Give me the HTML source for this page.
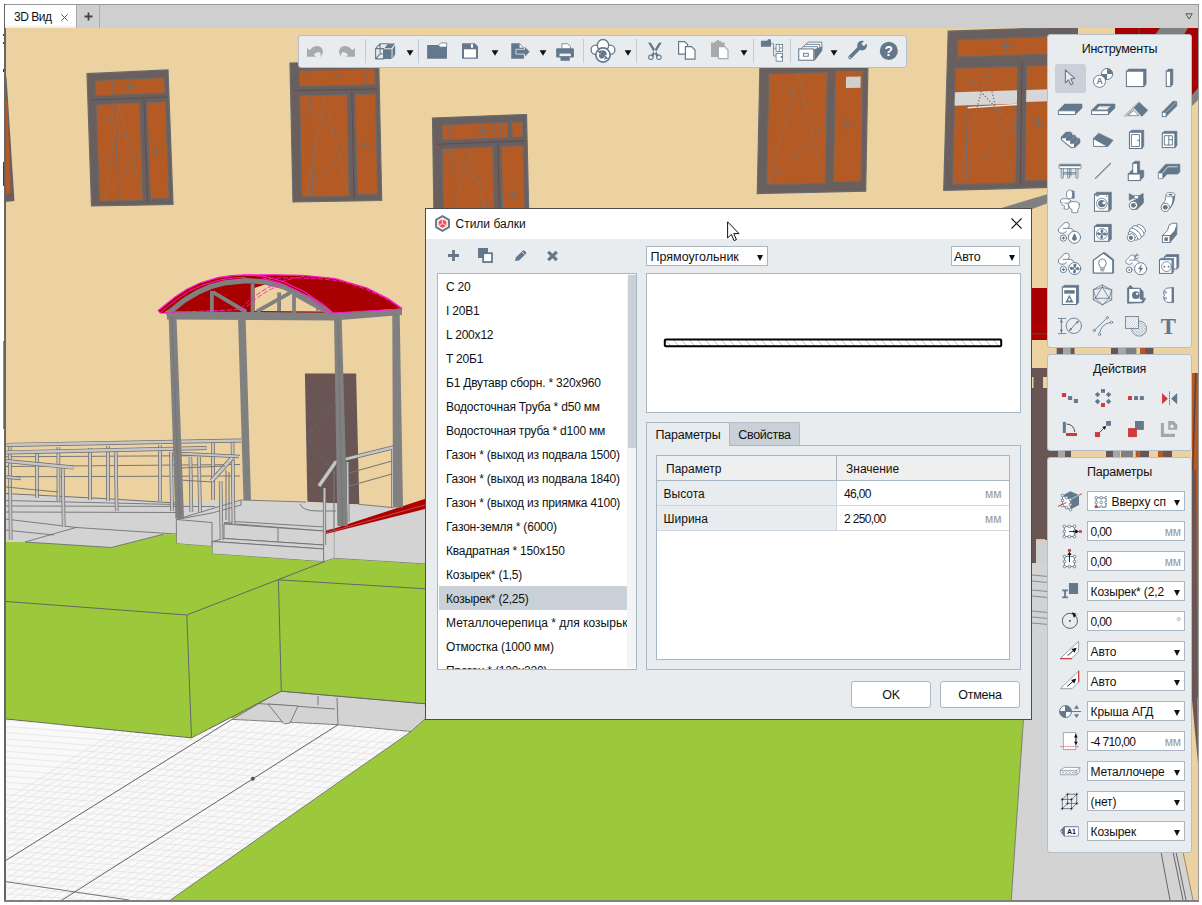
<!DOCTYPE html>
<html lang="ru"><head><meta charset="utf-8"><title>3D Вид</title><style>
*{box-sizing:border-box}
html,body{margin:0;padding:0;background:#fff}
body{width:1202px;height:905px;position:relative;overflow:hidden;font-family:"Liberation Sans",sans-serif;font-size:12px;color:#111}
.abs{position:absolute}
.ic{position:absolute;overflow:visible}
#scene{position:absolute;left:0;top:0}
.panel{position:absolute;background:#e8ecef;border:1px solid #b3bfcb;border-radius:3px}
.ptitle{position:absolute;left:0;right:0;text-align:center;font-size:12.5px;letter-spacing:-.2px;color:#111}
.n{letter-spacing:-.65px}
.tsep{position:absolute;top:39px;width:1px;height:24px;background:#c3ccd5}
.fld{position:absolute;left:1087px;width:98px;height:20px;background:#fff;border:1px solid #a9b7c4;line-height:20px;padding-left:2.5px;white-space:nowrap;overflow:hidden;font-size:12px;letter-spacing:-.1px}
.fld .u{position:absolute;right:3px;top:0;color:#999}
.cmb .a{top:7.5px!important}
.fld .a,.cmb .a{position:absolute;right:4.5px;top:7.5px;width:0;height:0;border-left:3.5px solid transparent;border-right:3.5px solid transparent;border-top:6px solid #111}
.cmb{position:absolute;height:20px;background:#fff;border:1px solid #a9b7c4;line-height:20px;padding-left:5px;white-space:nowrap;font-size:12.5px;letter-spacing:-.2px}
.li{position:absolute;left:1px;width:188px;height:24px;line-height:26px;padding-left:7px;white-space:nowrap;overflow:hidden;font-size:12px;letter-spacing:-.2px}
.btn{position:absolute;top:681px;width:80px;height:27px;background:#fff;border:1px solid #a9b7c4;border-radius:3px;text-align:center;line-height:27px;font-size:12.5px;letter-spacing:-.2px}

.cell{position:absolute;height:25px;line-height:26px;padding-left:8px;white-space:nowrap}
</style></head><body>
<svg id="scene" width="1202" height="905" viewBox="0 0 1202 905"><defs><clipPath id="floorclip"><polygon points="5,718.9 191.5,737.9 230,718 338,724.7 411,731.5 169,901 5,901"/></clipPath></defs><rect x="5" y="28" width="1193" height="873" fill="#ecd2a0"/>
<polygon points="87,73.7 168,70 173,204.5 91.5,206" fill="#6a5f5f" stroke="#686a6c" stroke-width="1.2"/>
<polygon points="95.4,80.6 164.6,77.6 165.2,93 95.9,95.9" fill="#b35a25" stroke="#686a6c" stroke-width=".9"/>
<line x1="112.4" y1="79.9" x2="112.9" y2="95.2" stroke="#7a6a68" stroke-width="1" />
<path d="M125.5 86.4h10M130.5 81.4v10" stroke="#7a6a64" stroke-width="1.3" fill="none"/>
<polygon points="96.2,104.5 139.6,102.8 143.1,200.4 99.5,201.2" fill="#b35a25" stroke="#686a6c" stroke-width=".9"/>
<line x1="114.8" y1="103.7" x2="118.2" y2="200.8" stroke="#7a6a68" stroke-width="1" />
<line x1="158.6" y1="102" x2="162.2" y2="198.7" stroke="#7a6a68" stroke-width="1" />
<line x1="97" y1="106.4" x2="140.9" y2="151.6" stroke="#84746e" stroke-width="1.3" stroke-dasharray="1.3 1.9"/>
<line x1="140.9" y1="151.6" x2="104.3" y2="199.1" stroke="#84746e" stroke-width="1.3" stroke-dasharray="1.3 1.9"/>
<line x1="104.3" y1="199.1" x2="119" y2="105.6" stroke="#84746e" stroke-width="1.3" stroke-dasharray="1.3 1.9"/>
<line x1="119" y1="105.6" x2="141.7" y2="197.1" stroke="#84746e" stroke-width="1.3" stroke-dasharray="1.3 1.9"/>
<polygon points="146.9,102.5 165.5,101.8 169.1,198.5 150.4,198.9" fill="#b35a25" stroke="#686a6c" stroke-width=".9"/>
<path d="M152.2 151.1h10M157.2 146.1v10" stroke="#7a6a64" stroke-width="1.3" fill="none"/>
<line x1="91.1" y1="100" x2="167.4" y2="97" stroke="#5c4d4c" stroke-width="1" />
<line x1="143.9" y1="99.2" x2="147.6" y2="202.3" stroke="#5c4d4c" stroke-width="1" />
<polygon points="290,63 378.7,61 381.7,200.5 293,202" fill="#6a5f5f" stroke="#686a6c" stroke-width="1.2"/>
<polygon points="299,70.4 374.9,68.8 375.2,84.8 299.4,86.4" fill="#b35a25" stroke="#686a6c" stroke-width=".9"/>
<line x1="309.1" y1="70.2" x2="309.4" y2="86.2" stroke="#7a6a68" stroke-width="1" />
<line x1="365.8" y1="69" x2="366.2" y2="85" stroke="#7a6a68" stroke-width="1" />
<path d="M332.3 77.3h10M337.3 72.3v10" stroke="#7a6a64" stroke-width="1.3" fill="none"/>
<polygon points="299.6,95.5 347,94.5 349.2,196.2 301.8,197" fill="#b35a25" stroke="#686a6c" stroke-width=".9"/>
<line x1="310.7" y1="95.2" x2="312.9" y2="196.8" stroke="#7a6a68" stroke-width="1" />
<line x1="367.9" y1="94" x2="370" y2="194.4" stroke="#7a6a68" stroke-width="1" />
<line x1="300.5" y1="97.5" x2="347.7" y2="145.3" stroke="#84746e" stroke-width="1.3" stroke-dasharray="1.3 1.9"/>
<line x1="347.7" y1="145.3" x2="307" y2="194.8" stroke="#84746e" stroke-width="1.3" stroke-dasharray="1.3 1.9"/>
<line x1="307" y1="194.8" x2="324.5" y2="97" stroke="#84746e" stroke-width="1.3" stroke-dasharray="1.3 1.9"/>
<line x1="324.5" y1="97" x2="347.8" y2="192.7" stroke="#84746e" stroke-width="1.3" stroke-dasharray="1.3 1.9"/>
<polygon points="355,94.3 375.4,93.9 377.6,194.3 357.2,194.6" fill="#b35a25" stroke="#686a6c" stroke-width=".9"/>
<path d="M360.4 145h10M365.4 140v10" stroke="#7a6a64" stroke-width="1.3" fill="none"/>
<line x1="294.1" y1="90.7" x2="377.5" y2="88.9" stroke="#5c4d4c" stroke-width="1" />
<line x1="351.8" y1="90.9" x2="354.1" y2="198.2" stroke="#5c4d4c" stroke-width="1" />
<polygon points="432.5,118 526.5,114.5 529.5,246 434.5,250" fill="#6a5f5f" stroke="#686a6c" stroke-width="1.2"/>
<polygon points="442,124.9 522.4,121.9 522.8,137 442.3,140.1" fill="#b35a25" stroke="#686a6c" stroke-width=".9"/>
<line x1="450.5" y1="124.6" x2="450.7" y2="139.8" stroke="#7a6a68" stroke-width="1" />
<line x1="494.7" y1="122.9" x2="495" y2="138.1" stroke="#7a6a68" stroke-width="1" />
<line x1="500.3" y1="122.7" x2="500.6" y2="137.9" stroke="#7a6a68" stroke-width="1" />
<path d="M477.6 130.6h10M482.6 125.6v10" stroke="#7a6a64" stroke-width="1.3" fill="none"/>
<polygon points="442.4,148.7 492.8,146.7 494.7,242.9 443.9,245" fill="#b35a25" stroke="#686a6c" stroke-width=".9"/>
<line x1="452.8" y1="148.3" x2="454.4" y2="244.5" stroke="#7a6a68" stroke-width="1" />
<line x1="515" y1="145.9" x2="517" y2="240.6" stroke="#7a6a68" stroke-width="1" />
<line x1="443.4" y1="150.6" x2="493.3" y2="194.8" stroke="#84746e" stroke-width="1.3" stroke-dasharray="1.3 1.9"/>
<line x1="493.3" y1="194.8" x2="449.6" y2="242.8" stroke="#84746e" stroke-width="1.3" stroke-dasharray="1.3 1.9"/>
<line x1="449.6" y1="242.8" x2="468.8" y2="149.6" stroke="#84746e" stroke-width="1.3" stroke-dasharray="1.3 1.9"/>
<line x1="468.8" y1="149.6" x2="493.2" y2="239.6" stroke="#84746e" stroke-width="1.3" stroke-dasharray="1.3 1.9"/>
<polygon points="501.3,146.4 523,145.6 525.1,240.3 503.3,241.2" fill="#b35a25" stroke="#686a6c" stroke-width=".9"/>
<path d="M507.2 194h10M512.2 189v10" stroke="#7a6a64" stroke-width="1.3" fill="none"/>
<line x1="436.7" y1="144.3" x2="525.2" y2="140.9" stroke="#5c4d4c" stroke-width="1" />
<line x1="497.9" y1="143.2" x2="500" y2="244.6" stroke="#5c4d4c" stroke-width="1" />
<polygon points="507.8,121.8 511.6,121.6 512,138.1 508.2,138.2" fill="#6a5f5f" stroke="#686a6c" stroke-width="1.2"/>
<polygon points="5,77 6.5,77 14.4,200 14.4,201 5,202" fill="#6a5f5f"/>
<polygon points="5.5,100 7.2,100 10.6,193 5.5,195" fill="#b35a25"/>
<rect x="3" y="162" width="2" height="24" fill="#a01818"/><rect x="3" y="34" width="2" height="2" fill="#446"/><rect x="3" y="42" width="2" height="2" fill="#533"/><rect x="3" y="69" width="2" height="3" fill="#335"/><rect x="3" y="341" width="1.6" height="88" fill="#7aa82a"/>
<polygon points="760,62 868,60 865.7,191.2 757.3,193.6" fill="#6a5f5f" stroke="#686a6c" stroke-width="1.2"/>
<polygon points="768.9,73.7 827.3,72.6 825.2,183.6 766.7,184.8" fill="#b35a25" stroke="#686a6c" stroke-width=".9"/>
<polygon points="835.4,71.1 863,70.6 861,181.5 833.4,182.1" fill="#b35a25" stroke="#686a6c" stroke-width=".9"/>
<polygon points="846.1,76.8 860.7,76.5 860.5,87.7 845.9,88" fill="#d0d0d0" />
<path d="M841.4 124.7h12M847.4 118.7v12" stroke="#7a6a64" stroke-width="1.3" fill="none"/>
<line x1="770.5" y1="75" x2="825.8" y2="123.8" stroke="#84746e" stroke-width="1.3" stroke-dasharray="1.3 1.9"/>
<line x1="825.8" y1="123.8" x2="768.4" y2="182.8" stroke="#84746e" stroke-width="1.3" stroke-dasharray="1.3 1.9"/>
<line x1="768.4" y1="182.8" x2="798.6" y2="74.4" stroke="#84746e" stroke-width="1.3" stroke-dasharray="1.3 1.9"/>
<line x1="798.6" y1="74.4" x2="822.6" y2="179" stroke="#84746e" stroke-width="1.3" stroke-dasharray="1.3 1.9"/>
<polygon points="948.2,31.2 1100,26 1100,186 943.7,190.4" fill="#6a5f5f" stroke="#686a6c" stroke-width="1.2"/>
<polygon points="957.8,39.6 1100,34.8 1100,52.4 957.4,57.1" fill="#b35a25" stroke="#686a6c" stroke-width=".9"/>
<path d="M999.3 46.7h14M1006.3 39.7v14" stroke="#7a6a64" stroke-width="1.3" fill="none"/>
<polygon points="955.5,68.3 1017.5,66.3 1015.7,182.8 952.4,184.6" fill="#b35a25" stroke="#686a6c" stroke-width=".9"/>
<polygon points="1026.6,66 1100,63.6 1100,178.8 1025.1,180.9" fill="#b35a25" stroke="#686a6c" stroke-width=".9"/>
<line x1="1022.1" y1="62.2" x2="1020.3" y2="185.1" stroke="#5c4d4c" stroke-width="1" />
<polygon points="954.9,92.2 1017.1,90.2 1016.9,103.8 954.6,105.8" fill="#d6d6d6" />
<polygon points="1026.3,89.9 1100,87.6 1100,99.6 1026.1,101.9" fill="#d6d6d6" />
<line x1="967.6" y1="105.3" x2="965.7" y2="183.4" stroke="#7a6a68" stroke-width="1.6" />
<line x1="967.6" y1="107.7" x2="1016.9" y2="104.6" stroke="#e6e6e6" stroke-width="1.5" />
<line x1="960.8" y1="70.5" x2="1015" y2="127.8" stroke="#84746e" stroke-width="1.3" stroke-dasharray="1.3 1.9"/>
<line x1="1015" y1="127.8" x2="958" y2="182" stroke="#84746e" stroke-width="1.3" stroke-dasharray="1.3 1.9"/>
<line x1="958" y1="182" x2="986.8" y2="69.7" stroke="#84746e" stroke-width="1.3" stroke-dasharray="1.3 1.9"/>
<line x1="986.8" y1="69.7" x2="1012.6" y2="178.9" stroke="#84746e" stroke-width="1.3" stroke-dasharray="1.3 1.9"/>
<path d="M1032.2 122.3h12M1038.2 116.3v12" stroke="#7a6a64" stroke-width="1.3" fill="none"/>
<rect x="1078" y="28" width="40" height="10" fill="#ecd2a0"/>
<polygon points="998,209 1048,194 1048,203 1032,209" fill="#808080"/>
<rect x="1031" y="288" width="20" height="52" fill="#a80000"/>
<rect x="1031" y="333" width="20" height="1.5" fill="#7a3030"/>
<rect x="1115" y="28" width="84" height="70" fill="#a80000"/>
<polygon points="1160,28 1188,28 1183,36 1154,36" fill="#808080"/>
<rect x="1138" y="28" width="2" height="8" fill="#8a2020"/>
<polygon points="1192,95 1198,88 1198,100 1192,106" fill="#808080"/>
<rect x="1031" y="368" width="17.5" height="195" fill="#6a5555"/>
<rect x="1056.7" y="347" width="6.3" height="8.5" fill="#6a5555"/>
<rect x="1063" y="347" width="7.6" height="8.5" fill="#a6a6a6"/>
<rect x="1070.6" y="347" width="3.9" height="8.5" fill="#6a5555"/>
<rect x="1111" y="347" width="7" height="8.5" fill="#6a5555"/>
<rect x="1118" y="347" width="7.6" height="8.5" fill="#a6a6a6"/>
<rect x="1125.6" y="347" width="10.8" height="8.5" fill="#808080"/>
<rect x="1140" y="347" width="5" height="8.5" fill="#b35a25"/>
<rect x="1145" y="347" width="8.4" height="8.5" fill="#6a5555"/>
<rect x="1047" y="450" width="11" height="8.5" fill="#6a5555"/>
<rect x="1058" y="450" width="7" height="8.5" fill="#a6a6a6"/>
<rect x="1065" y="450" width="6" height="8.5" fill="#6a5555"/>
<rect x="1106" y="450" width="7" height="8.5" fill="#6a5555"/>
<rect x="1113" y="450" width="7" height="8.5" fill="#a6a6a6"/>
<rect x="1121" y="450" width="12" height="8.5" fill="#808080"/>
<rect x="1135.7" y="450" width="3.8" height="8.5" fill="#b35a25"/>
<rect x="1139.5" y="450" width="9.5" height="8.5" fill="#6a5555"/>
<rect x="1158" y="450" width="5" height="8.5" fill="#b35a25"/>
<rect x="1163" y="450" width="9" height="8.5" fill="#6a5555"/>
<rect x="1031.5" y="377" width="2" height="11" fill="#ecd2a0"/>
<rect x="1043" y="377" width="5" height="11" fill="#ecd2a0"/>
<rect x="1036" y="540" width="12" height="23" fill="#d0d0d0"/>
<rect x="1036" y="539" width="9" height="1.5" fill="#e0c870"/>
<polygon points="1192,373 1199,373 1199,700 1192,690" fill="#b35a25"/>
<polygon points="1192,470 1196,470 1198,763 1192,700" fill="#6a5555"/>
<polygon points="1195,373 1196.5,373 1193.5,470 1192,470" fill="#5a4040"/>
<polygon points="1031,563 1110,563 1193,901 1005,901 1022,717" fill="#d3d3d3"/>
<line x1="1161" y1="852" x2="1170" y2="900" stroke="#666" stroke-width="1"/>
<line x1="1173" y1="852" x2="1183" y2="900" stroke="#666" stroke-width="1"/>
<line x1="1176" y1="852" x2="1186" y2="900" stroke="#666" stroke-width="1"/>
<line x1="1183" y1="852" x2="1193" y2="900" stroke="#777" stroke-width=".8"/>
<line x1="1032" y1="575" x2="1048" y2="576.5" stroke="#777" stroke-width=".8"/>
<line x1="1032" y1="581" x2="1048" y2="582.5" stroke="#777" stroke-width=".8"/>
<line x1="1032" y1="590" x2="1048" y2="591.5" stroke="#777" stroke-width=".8"/>
<line x1="1032" y1="596" x2="1048" y2="597.5" stroke="#777" stroke-width=".8"/>
<line x1="1032" y1="611" x2="1048" y2="612.5" stroke="#777" stroke-width=".8"/>
<line x1="1032" y1="617" x2="1048" y2="618.5" stroke="#777" stroke-width=".8"/>
<line x1="1032" y1="623" x2="1048" y2="624.5" stroke="#777" stroke-width=".8"/>
<polygon points="304.9,373.4 356.1,373.4 359.3,504.4 307.4,501.8" fill="#6a5555"/>
<line x1="306.1" y1="438" x2="356.2" y2="375.1" stroke="#5f6568" stroke-width="0.9" />
<line x1="306.1" y1="438" x2="359" y2="502" stroke="#5f6568" stroke-width="0.9" />
<polygon points="5,493.5 112,499 176,503 241,500 306,502 359,504.4 393,507.6 426,507.6 426,570 5,570" fill="#d3d3d3"/>
<line x1="5" y1="493.5" x2="112" y2="499" stroke="#666" stroke-width="0.9" />
<line x1="112" y1="499" x2="176" y2="503" stroke="#666" stroke-width="0.9" />
<line x1="241.4" y1="500" x2="306" y2="502" stroke="#666" stroke-width="0.8" />
<line x1="359" y1="504.4" x2="393" y2="507.6" stroke="#666" stroke-width="0.8" />
<line x1="5" y1="500.5" x2="176" y2="504.5" stroke="#666" stroke-width="0.8" />
<line x1="5" y1="506" x2="215" y2="506.5" stroke="#666" stroke-width="0.8" />
<line x1="5" y1="512" x2="176" y2="512.5" stroke="#666" stroke-width="0.8" />
<line x1="5" y1="519" x2="76" y2="527.5" stroke="#666" stroke-width="0.8" />
<line x1="76" y1="527.5" x2="176" y2="534" stroke="#666" stroke-width="0.8" />
<line x1="5" y1="530" x2="54" y2="535" stroke="#666" stroke-width="0.8" />
<line x1="25" y1="542" x2="76" y2="527.5" stroke="#666" stroke-width="0.8" />
<polygon points="176.3,519.5 241,500 241,505 212,513" fill="#d3d3d3" stroke="#666" stroke-width="0.8" stroke-linejoin="round"/>
<polygon points="176.3,519.5 212,522.5 212,546.5 176.5,543.7" fill="#d3d3d3" stroke="#666" stroke-width="0.8" stroke-linejoin="round"/>
<polygon points="224,523 234,521.5 325,527 323.6,531" fill="#d3d3d3" stroke="#666" stroke-width="0.8" stroke-linejoin="round"/>
<polygon points="224,524 323.6,531 323.6,545 224,538.5" fill="#d3d3d3" stroke="#666" stroke-width="0.8" stroke-linejoin="round"/>
<line x1="278" y1="528" x2="278" y2="541.5" stroke="#666" stroke-width="0.8" />
<polygon points="212.2,541.5 224,538.5 323.6,545 325,549" fill="#d3d3d3" stroke="#666" stroke-width="0.8" stroke-linejoin="round"/>
<polygon points="212.2,541.5 325,549 323.6,561.7 212.2,554" fill="#d3d3d3" stroke="#666" stroke-width="0.8" stroke-linejoin="round"/>
<polygon points="323.6,531 334.4,529 334.4,558.4 323.6,561.7" fill="#d3d3d3" stroke="#666" stroke-width="0.8" stroke-linejoin="round"/>
<path d="M300 504 Q302 511 318 511 L336 511" fill="none" stroke="#666" stroke-width=".8"/>
<polygon points="334.4,532.5 426,508.5 426,564 334.4,558.4" fill="#d3d3d3"/>
<line x1="334.4" y1="558.4" x2="426" y2="564" stroke="#666" stroke-width="0.8" />
<polygon points="323.6,532 426,498.6 426,508.8 323.6,534.6" fill="#ae0000"/>
<line x1="323.6" y1="533.6" x2="426" y2="504.6" stroke="#d08080" stroke-width="0.6" />
<polygon points="5,542.1 25,542 111.4,547.5 163.4,534.2 176,534.2 176.5,543.7 212.2,546.5 212.2,554 323.6,561.7 334.4,558.4 426,564.2 426,720 5,740" fill="#9cc83c"/>
<polygon points="411,731.5 426,718 1023.6,717 1011.2,901 168,901" fill="#9cc83c"/>
<line x1="1023.6" y1="717" x2="1011.2" y2="901" stroke="#777" stroke-width="0.9" />
<line x1="25" y1="542" x2="111.4" y2="547.5" stroke="#666" stroke-width="0.8" />
<line x1="111.4" y1="547.5" x2="163.4" y2="534.2" stroke="#666" stroke-width="0.8" />
<polygon points="5,718.9 191.5,737.9 230,718 338,724.7 411,731.5 169,901 5,901" fill="#f9f9f9"/>
<polygon points="232,719.4 267.6,698.4 281.3,691.2 426,703.8 426,718 411,731.5 338,724.7" fill="#d3d3d3" stroke="#666" stroke-width="0.8" stroke-linejoin="round"/>
<line x1="258" y1="703.5" x2="335" y2="709" stroke="#666" stroke-width="0.8" />
<polygon points="268,704 298,706 290,723 284,724" fill="#d3d3d3" stroke="#666" stroke-width="0.8" stroke-linejoin="round"/>
<line x1="318" y1="696" x2="318" y2="705" stroke="#666" stroke-width="0.8" />
<line x1="337" y1="698" x2="338" y2="724.7" stroke="#666" stroke-width="0.8" />
<polygon points="5,601.4 186.8,615 191.5,737.9 5,718.9" fill="#9cc83c"/>
<polygon points="186.8,615 278.4,579.8 281.3,691.2 267.6,698.4 230,718 191.5,737.9" fill="#9cc83c"/>
<polygon points="278.4,579.8 426,588.8 426,703.8 281.3,691.2" fill="#9cc83c"/>
<line x1="5" y1="601.4" x2="186.8" y2="615" stroke="#666" stroke-width="1" />
<line x1="186.8" y1="615" x2="191.5" y2="737.9" stroke="#666" stroke-width="1" />
<line x1="5" y1="718.9" x2="191.5" y2="737.9" stroke="#666" stroke-width="1" />
<line x1="186.8" y1="615" x2="325" y2="561.5" stroke="#666" stroke-width="1" />
<line x1="278.4" y1="579.8" x2="281.3" y2="691.2" stroke="#666" stroke-width="1" />
<line x1="278.4" y1="579.8" x2="426" y2="588.8" stroke="#666" stroke-width="1" />
<line x1="281.3" y1="691.2" x2="426" y2="703.8" stroke="#666" stroke-width="1" />
<line x1="191.5" y1="737.9" x2="281.3" y2="691.2" stroke="#666" stroke-width="1" />
<g clip-path="url(#floorclip)">
<line x1="142" y1="714.9" x2="-221.2" y2="941.46" stroke="#dcdcdc" stroke-width="0.6" />
<line x1="151" y1="715.35" x2="-212.2" y2="941.91" stroke="#dcdcdc" stroke-width="0.6" />
<line x1="160" y1="715.8" x2="-203.2" y2="942.36" stroke="#dcdcdc" stroke-width="0.6" />
<line x1="169" y1="716.25" x2="-194.2" y2="942.81" stroke="#dcdcdc" stroke-width="0.6" />
<line x1="178" y1="716.7" x2="-185.2" y2="943.26" stroke="#dcdcdc" stroke-width="0.6" />
<line x1="187" y1="717.15" x2="-176.2" y2="943.71" stroke="#dcdcdc" stroke-width="0.6" />
<line x1="196" y1="717.6" x2="-167.2" y2="944.16" stroke="#dcdcdc" stroke-width="0.6" />
<line x1="205" y1="718.05" x2="-158.2" y2="944.61" stroke="#dcdcdc" stroke-width="0.6" />
<line x1="214" y1="718.5" x2="-149.2" y2="945.06" stroke="#dcdcdc" stroke-width="0.6" />
<line x1="223" y1="718.95" x2="-140.2" y2="945.51" stroke="#dcdcdc" stroke-width="0.6" />
<line x1="232" y1="719.4" x2="-131.2" y2="945.96" stroke="#dcdcdc" stroke-width="0.6" />
<line x1="241" y1="719.85" x2="-122.2" y2="946.41" stroke="#dcdcdc" stroke-width="0.6" />
<line x1="250" y1="720.3" x2="-113.2" y2="946.86" stroke="#dcdcdc" stroke-width="0.6" />
<line x1="259" y1="720.75" x2="-104.2" y2="947.31" stroke="#dcdcdc" stroke-width="0.6" />
<line x1="268" y1="721.2" x2="-95.2" y2="947.76" stroke="#dcdcdc" stroke-width="0.6" />
<line x1="277" y1="721.65" x2="-86.2" y2="948.21" stroke="#dcdcdc" stroke-width="0.6" />
<line x1="286" y1="722.1" x2="-77.2" y2="948.66" stroke="#dcdcdc" stroke-width="0.6" />
<line x1="295" y1="722.55" x2="-68.2" y2="949.11" stroke="#dcdcdc" stroke-width="0.6" />
<line x1="304" y1="723" x2="-59.2" y2="949.56" stroke="#dcdcdc" stroke-width="0.6" />
<line x1="313" y1="723.45" x2="-50.2" y2="950.01" stroke="#dcdcdc" stroke-width="0.6" />
<line x1="322" y1="723.9" x2="-41.2" y2="950.46" stroke="#dcdcdc" stroke-width="0.6" />
<line x1="331" y1="724.35" x2="-32.2" y2="950.91" stroke="#dcdcdc" stroke-width="0.6" />
<line x1="340" y1="724.8" x2="-23.2" y2="951.36" stroke="#dcdcdc" stroke-width="0.6" />
<line x1="349" y1="725.25" x2="-14.2" y2="951.81" stroke="#dcdcdc" stroke-width="0.6" />
<line x1="358" y1="725.7" x2="-5.2" y2="952.26" stroke="#dcdcdc" stroke-width="0.6" />
<line x1="367" y1="726.15" x2="3.8" y2="952.71" stroke="#dcdcdc" stroke-width="0.6" />
<line x1="376" y1="726.6" x2="12.8" y2="953.16" stroke="#dcdcdc" stroke-width="0.6" />
<line x1="385" y1="727.05" x2="21.8" y2="953.61" stroke="#dcdcdc" stroke-width="0.6" />
<line x1="394" y1="727.5" x2="30.8" y2="954.06" stroke="#dcdcdc" stroke-width="0.6" />
<line x1="403" y1="727.95" x2="39.8" y2="954.51" stroke="#dcdcdc" stroke-width="0.6" />
<line x1="412" y1="728.4" x2="48.8" y2="954.96" stroke="#dcdcdc" stroke-width="0.6" />
<line x1="421" y1="728.85" x2="57.8" y2="955.41" stroke="#dcdcdc" stroke-width="0.6" />
<line x1="430" y1="729.3" x2="66.8" y2="955.86" stroke="#dcdcdc" stroke-width="0.6" />
<line x1="439" y1="729.75" x2="75.8" y2="956.31" stroke="#dcdcdc" stroke-width="0.6" />
<line x1="448" y1="730.2" x2="84.8" y2="956.76" stroke="#dcdcdc" stroke-width="0.6" />
<line x1="457" y1="730.65" x2="93.8" y2="957.21" stroke="#dcdcdc" stroke-width="0.6" />
<line x1="466" y1="731.1" x2="102.8" y2="957.66" stroke="#dcdcdc" stroke-width="0.6" />
<line x1="475" y1="731.55" x2="111.8" y2="958.11" stroke="#dcdcdc" stroke-width="0.6" />
<line x1="484" y1="732" x2="120.8" y2="958.56" stroke="#dcdcdc" stroke-width="0.6" />
<line x1="493" y1="732.45" x2="129.8" y2="959.01" stroke="#dcdcdc" stroke-width="0.6" />
<line x1="502" y1="732.9" x2="138.8" y2="959.46" stroke="#dcdcdc" stroke-width="0.6" />
<line x1="511" y1="733.35" x2="147.8" y2="959.91" stroke="#dcdcdc" stroke-width="0.6" />
<line x1="520" y1="733.8" x2="156.8" y2="960.36" stroke="#dcdcdc" stroke-width="0.6" />
<line x1="529" y1="734.25" x2="165.8" y2="960.81" stroke="#dcdcdc" stroke-width="0.6" />
<line x1="538" y1="734.7" x2="174.8" y2="961.26" stroke="#dcdcdc" stroke-width="0.6" />
<line x1="547" y1="735.15" x2="183.8" y2="961.71" stroke="#dcdcdc" stroke-width="0.6" />
<line x1="556" y1="735.6" x2="192.8" y2="962.16" stroke="#dcdcdc" stroke-width="0.6" />
<line x1="565" y1="736.05" x2="201.8" y2="962.61" stroke="#dcdcdc" stroke-width="0.6" />
<line x1="574" y1="736.5" x2="210.8" y2="963.06" stroke="#dcdcdc" stroke-width="0.6" />
<line x1="583" y1="736.95" x2="219.8" y2="963.51" stroke="#dcdcdc" stroke-width="0.6" />
<line x1="592" y1="737.4" x2="228.8" y2="963.96" stroke="#dcdcdc" stroke-width="0.6" />
<line x1="601" y1="737.85" x2="237.8" y2="964.41" stroke="#dcdcdc" stroke-width="0.6" />
<line x1="610" y1="738.3" x2="246.8" y2="964.86" stroke="#dcdcdc" stroke-width="0.6" />
<line x1="619" y1="738.75" x2="255.8" y2="965.31" stroke="#dcdcdc" stroke-width="0.6" />
<line x1="628" y1="739.2" x2="264.8" y2="965.76" stroke="#dcdcdc" stroke-width="0.6" />
<line x1="637" y1="739.65" x2="273.8" y2="966.21" stroke="#dcdcdc" stroke-width="0.6" />
<line x1="646" y1="740.1" x2="282.8" y2="966.66" stroke="#dcdcdc" stroke-width="0.6" />
<line x1="655" y1="740.55" x2="291.8" y2="967.11" stroke="#dcdcdc" stroke-width="0.6" />
<line x1="664" y1="741" x2="300.8" y2="967.56" stroke="#dcdcdc" stroke-width="0.6" />
<line x1="673" y1="741.45" x2="309.8" y2="968.01" stroke="#dcdcdc" stroke-width="0.6" />
<line x1="682" y1="741.9" x2="318.8" y2="968.46" stroke="#dcdcdc" stroke-width="0.6" />
<line x1="691" y1="742.35" x2="327.8" y2="968.91" stroke="#dcdcdc" stroke-width="0.6" />
<line x1="700" y1="742.8" x2="336.8" y2="969.36" stroke="#dcdcdc" stroke-width="0.6" />
<line x1="709" y1="743.25" x2="345.8" y2="969.81" stroke="#dcdcdc" stroke-width="0.6" />
<line x1="718" y1="743.7" x2="354.8" y2="970.26" stroke="#dcdcdc" stroke-width="0.6" />
<line x1="727" y1="744.15" x2="363.8" y2="970.71" stroke="#dcdcdc" stroke-width="0.6" />
<line x1="736" y1="744.6" x2="372.8" y2="971.16" stroke="#dcdcdc" stroke-width="0.6" />
<line x1="745" y1="745.05" x2="381.8" y2="971.61" stroke="#dcdcdc" stroke-width="0.6" />
<line x1="754" y1="745.5" x2="390.8" y2="972.06" stroke="#dcdcdc" stroke-width="0.6" />
<line x1="763" y1="745.95" x2="399.8" y2="972.51" stroke="#dcdcdc" stroke-width="0.6" />
<line x1="772" y1="746.4" x2="408.8" y2="972.96" stroke="#dcdcdc" stroke-width="0.6" />
<line x1="781" y1="746.85" x2="417.8" y2="973.41" stroke="#dcdcdc" stroke-width="0.6" />
<line x1="790" y1="747.3" x2="426.8" y2="973.86" stroke="#dcdcdc" stroke-width="0.6" />
<line x1="799" y1="747.75" x2="435.8" y2="974.31" stroke="#dcdcdc" stroke-width="0.6" />
<line x1="808" y1="748.2" x2="444.8" y2="974.76" stroke="#dcdcdc" stroke-width="0.6" />
<line x1="817" y1="748.65" x2="453.8" y2="975.21" stroke="#dcdcdc" stroke-width="0.6" />
<line x1="826" y1="749.1" x2="462.8" y2="975.66" stroke="#dcdcdc" stroke-width="0.6" />
<line x1="835" y1="749.55" x2="471.8" y2="976.11" stroke="#dcdcdc" stroke-width="0.6" />
<line x1="844" y1="750" x2="480.8" y2="976.56" stroke="#dcdcdc" stroke-width="0.6" />
<line x1="853" y1="750.45" x2="489.8" y2="977.01" stroke="#dcdcdc" stroke-width="0.6" />
<line x1="862" y1="750.9" x2="498.8" y2="977.46" stroke="#dcdcdc" stroke-width="0.6" />
<line x1="871" y1="751.35" x2="507.8" y2="977.91" stroke="#dcdcdc" stroke-width="0.6" />
<line x1="880" y1="751.8" x2="516.8" y2="978.36" stroke="#dcdcdc" stroke-width="0.6" />
<line x1="889" y1="752.25" x2="525.8" y2="978.81" stroke="#dcdcdc" stroke-width="0.6" />
<line x1="898" y1="752.7" x2="534.8" y2="979.26" stroke="#dcdcdc" stroke-width="0.6" />
<line x1="907" y1="753.15" x2="543.8" y2="979.71" stroke="#dcdcdc" stroke-width="0.6" />
<line x1="916" y1="753.6" x2="552.8" y2="980.16" stroke="#dcdcdc" stroke-width="0.6" />
<line x1="925" y1="754.05" x2="561.8" y2="980.61" stroke="#dcdcdc" stroke-width="0.6" />
<line x1="934" y1="754.5" x2="570.8" y2="981.06" stroke="#dcdcdc" stroke-width="0.6" />
<line x1="943" y1="754.95" x2="579.8" y2="981.51" stroke="#dcdcdc" stroke-width="0.6" />
<line x1="5" y1="714" x2="430" y2="746" stroke="#dedede" stroke-width="0.6" />
<line x1="5" y1="720.2" x2="430" y2="752.2" stroke="#dedede" stroke-width="0.6" />
<line x1="5" y1="726.4" x2="430" y2="758.4" stroke="#dedede" stroke-width="0.6" />
<line x1="5" y1="732.6" x2="430" y2="764.6" stroke="#dedede" stroke-width="0.6" />
<line x1="5" y1="738.8" x2="430" y2="770.8" stroke="#dedede" stroke-width="0.6" />
<line x1="5" y1="745" x2="430" y2="777" stroke="#dedede" stroke-width="0.6" />
<line x1="5" y1="751.2" x2="430" y2="783.2" stroke="#dedede" stroke-width="0.6" />
<line x1="5" y1="757.4" x2="430" y2="789.4" stroke="#dedede" stroke-width="0.6" />
<line x1="5" y1="763.6" x2="430" y2="795.6" stroke="#dedede" stroke-width="0.6" />
<line x1="5" y1="769.8" x2="430" y2="801.8" stroke="#dedede" stroke-width="0.6" />
<line x1="5" y1="776" x2="430" y2="808" stroke="#dedede" stroke-width="0.6" />
<line x1="5" y1="782.2" x2="430" y2="814.2" stroke="#dedede" stroke-width="0.6" />
<line x1="5" y1="788.4" x2="430" y2="820.4" stroke="#dedede" stroke-width="0.6" />
<line x1="5" y1="794.6" x2="430" y2="826.6" stroke="#dedede" stroke-width="0.6" />
<line x1="5" y1="800.8" x2="430" y2="832.8" stroke="#dedede" stroke-width="0.6" />
<line x1="5" y1="807" x2="430" y2="839" stroke="#dedede" stroke-width="0.6" />
<line x1="5" y1="813.2" x2="430" y2="845.2" stroke="#dedede" stroke-width="0.6" />
<line x1="5" y1="819.4" x2="430" y2="851.4" stroke="#dedede" stroke-width="0.6" />
<line x1="5" y1="825.6" x2="430" y2="857.6" stroke="#dedede" stroke-width="0.6" />
<line x1="5" y1="831.8" x2="430" y2="863.8" stroke="#dedede" stroke-width="0.6" />
<line x1="5" y1="838" x2="430" y2="870" stroke="#dedede" stroke-width="0.6" />
<line x1="5" y1="844.2" x2="430" y2="876.2" stroke="#dedede" stroke-width="0.6" />
<line x1="5" y1="850.4" x2="430" y2="882.4" stroke="#dedede" stroke-width="0.6" />
<line x1="5" y1="856.6" x2="430" y2="888.6" stroke="#dedede" stroke-width="0.6" />
<line x1="5" y1="862.8" x2="430" y2="894.8" stroke="#dedede" stroke-width="0.6" />
<line x1="5" y1="869" x2="430" y2="901" stroke="#dedede" stroke-width="0.6" />
<line x1="5" y1="875.2" x2="430" y2="907.2" stroke="#dedede" stroke-width="0.6" />
<line x1="5" y1="881.4" x2="430" y2="913.4" stroke="#dedede" stroke-width="0.6" />
<line x1="5" y1="887.6" x2="430" y2="919.6" stroke="#dedede" stroke-width="0.6" />
<line x1="5" y1="893.8" x2="430" y2="925.8" stroke="#dedede" stroke-width="0.6" />
<line x1="5" y1="900" x2="430" y2="932" stroke="#dedede" stroke-width="0.6" />
<line x1="5" y1="906.2" x2="430" y2="938.2" stroke="#dedede" stroke-width="0.6" />
<line x1="5" y1="912.4" x2="430" y2="944.4" stroke="#dedede" stroke-width="0.6" />
<line x1="5" y1="918.6" x2="430" y2="950.6" stroke="#dedede" stroke-width="0.6" />
<line x1="5" y1="924.8" x2="430" y2="956.8" stroke="#dedede" stroke-width="0.6" />
<line x1="5" y1="931" x2="430" y2="963" stroke="#dedede" stroke-width="0.6" />
<line x1="5" y1="937.2" x2="430" y2="969.2" stroke="#dedede" stroke-width="0.6" />
<line x1="5" y1="943.4" x2="430" y2="975.4" stroke="#dedede" stroke-width="0.6" />
<line x1="5" y1="949.6" x2="430" y2="981.6" stroke="#dedede" stroke-width="0.6" />
<line x1="5" y1="955.8" x2="430" y2="987.8" stroke="#dedede" stroke-width="0.6" />
<line x1="5" y1="962" x2="430" y2="994" stroke="#dedede" stroke-width="0.6" />
<line x1="5" y1="968.2" x2="430" y2="1000.2" stroke="#dedede" stroke-width="0.6" />
<line x1="5" y1="974.4" x2="430" y2="1006.4" stroke="#dedede" stroke-width="0.6" />
<line x1="5" y1="980.6" x2="430" y2="1012.6" stroke="#dedede" stroke-width="0.6" />
<line x1="5" y1="986.8" x2="430" y2="1018.8" stroke="#dedede" stroke-width="0.6" />
<line x1="5" y1="993" x2="430" y2="1025" stroke="#dedede" stroke-width="0.6" />
<line x1="5" y1="999.2" x2="430" y2="1031.2" stroke="#dedede" stroke-width="0.6" />
<line x1="5" y1="1005.4" x2="430" y2="1037.4" stroke="#dedede" stroke-width="0.6" />
<line x1="5" y1="1011.6" x2="430" y2="1043.6" stroke="#dedede" stroke-width="0.6" />
<line x1="5" y1="1017.8" x2="430" y2="1049.8" stroke="#dedede" stroke-width="0.6" />
<line x1="5" y1="1024" x2="430" y2="1056" stroke="#dedede" stroke-width="0.6" />
<line x1="5" y1="1030.2" x2="430" y2="1062.2" stroke="#dedede" stroke-width="0.6" />
<line x1="5" y1="1036.4" x2="430" y2="1068.4" stroke="#dedede" stroke-width="0.6" />
<line x1="5" y1="1042.6" x2="430" y2="1074.6" stroke="#dedede" stroke-width="0.6" />
<line x1="5" y1="1048.8" x2="430" y2="1080.8" stroke="#dedede" stroke-width="0.6" />
<line x1="5" y1="1055" x2="430" y2="1087" stroke="#dedede" stroke-width="0.6" />
<line x1="5" y1="1061.2" x2="430" y2="1093.2" stroke="#dedede" stroke-width="0.6" />
<line x1="5" y1="1067.4" x2="430" y2="1099.4" stroke="#dedede" stroke-width="0.6" />
<line x1="5" y1="1073.6" x2="430" y2="1105.6" stroke="#dedede" stroke-width="0.6" />
<line x1="5" y1="1079.8" x2="430" y2="1111.8" stroke="#dedede" stroke-width="0.6" />
</g>
<line x1="232" y1="719.4" x2="5" y2="861" stroke="#666" stroke-width="1" />
<line x1="338" y1="724.7" x2="60.5" y2="901" stroke="#666" stroke-width="1" />
<line x1="5" y1="881.5" x2="129" y2="900" stroke="#666" stroke-width="0.9" />
<line x1="411" y1="731.5" x2="169" y2="901" stroke="#666" stroke-width="0.8" />
<circle cx="252.8" cy="778.7" r="2" fill="#555"/>
<line x1="6" y1="456.8" x2="240" y2="455.5" stroke="#777" stroke-width="1.1" />
<line x1="6" y1="466.5" x2="240" y2="464.5" stroke="#777" stroke-width="1.1" />
<line x1="6" y1="476.7" x2="240" y2="476" stroke="#777" stroke-width="1.1" />
<line x1="9.7" y1="446" x2="10.7" y2="540" stroke="#6a6a6a" stroke-width="3.6" /><line x1="9.7" y1="446" x2="10.7" y2="540" stroke="#c6c6c6" stroke-width="2.2" />
<line x1="58.4" y1="447" x2="58.4" y2="501" stroke="#6a6a6a" stroke-width="3.6" /><line x1="58.4" y1="447" x2="58.4" y2="501" stroke="#c6c6c6" stroke-width="2.2" />
<line x1="62.7" y1="466" x2="63.7" y2="527" stroke="#6a6a6a" stroke-width="3.6" /><line x1="62.7" y1="466" x2="63.7" y2="527" stroke="#c6c6c6" stroke-width="2.2" />
<line x1="108" y1="446" x2="108" y2="501" stroke="#6a6a6a" stroke-width="3.6" /><line x1="108" y1="446" x2="108" y2="501" stroke="#c6c6c6" stroke-width="2.2" />
<line x1="115.7" y1="452" x2="116.7" y2="511" stroke="#6a6a6a" stroke-width="3.6" /><line x1="115.7" y1="452" x2="116.7" y2="511" stroke="#c6c6c6" stroke-width="2.2" />
<line x1="160" y1="445" x2="160" y2="501" stroke="#6a6a6a" stroke-width="3.6" /><line x1="160" y1="445" x2="160" y2="501" stroke="#c6c6c6" stroke-width="2.2" />
<line x1="171" y1="452" x2="172" y2="511" stroke="#6a6a6a" stroke-width="3.6" /><line x1="171" y1="452" x2="172" y2="511" stroke="#c6c6c6" stroke-width="2.2" />
<line x1="190.4" y1="457" x2="191.4" y2="512" stroke="#6a6a6a" stroke-width="3.6" /><line x1="190.4" y1="457" x2="191.4" y2="512" stroke="#c6c6c6" stroke-width="2.2" />
<line x1="199" y1="457" x2="200" y2="512" stroke="#6a6a6a" stroke-width="3.6" /><line x1="199" y1="457" x2="200" y2="512" stroke="#c6c6c6" stroke-width="2.2" />
<line x1="213" y1="443" x2="213" y2="500" stroke="#6a6a6a" stroke-width="3.6" /><line x1="213" y1="443" x2="213" y2="500" stroke="#c6c6c6" stroke-width="2.2" />
<line x1="232.5" y1="441" x2="233.5" y2="524" stroke="#6a6a6a" stroke-width="3.6" /><line x1="232.5" y1="441" x2="233.5" y2="524" stroke="#c6c6c6" stroke-width="2.2" />
<line x1="220.6" y1="481" x2="221.6" y2="540" stroke="#6a6a6a" stroke-width="3.6" /><line x1="220.6" y1="481" x2="221.6" y2="540" stroke="#c6c6c6" stroke-width="2.2" />
<line x1="37" y1="452" x2="37" y2="498" stroke="#6a6a6a" stroke-width="3.6" /><line x1="37" y1="452" x2="37" y2="498" stroke="#c6c6c6" stroke-width="2.2" />
<line x1="90" y1="448" x2="90" y2="500" stroke="#6a6a6a" stroke-width="3.6" /><line x1="90" y1="448" x2="90" y2="500" stroke="#c6c6c6" stroke-width="2.2" />
<line x1="6.5" y1="444.9" x2="241.2" y2="440.5" stroke="#6a6a6a" stroke-width="4" /><line x1="6.5" y1="444.9" x2="241.2" y2="440.5" stroke="#c6c6c6" stroke-width="2.6" />
<line x1="6.5" y1="452.4" x2="206.6" y2="448" stroke="#6a6a6a" stroke-width="4" /><line x1="6.5" y1="452.4" x2="206.6" y2="448" stroke="#c6c6c6" stroke-width="2.6" />
<line x1="6.5" y1="461" x2="73.5" y2="467.6" stroke="#6a6a6a" stroke-width="4" /><line x1="6.5" y1="461" x2="73.5" y2="467.6" stroke="#c6c6c6" stroke-width="2.6" />
<line x1="6.5" y1="477" x2="21" y2="478.5" stroke="#6a6a6a" stroke-width="3.4" /><line x1="6.5" y1="477" x2="21" y2="478.5" stroke="#c6c6c6" stroke-width="2" />
<line x1="178" y1="453.5" x2="239" y2="456.5" stroke="#6a6a6a" stroke-width="3.4" /><line x1="178" y1="453.5" x2="239" y2="456.5" stroke="#c6c6c6" stroke-width="2" />
<line x1="211.5" y1="481" x2="232" y2="458" stroke="#6a6a6a" stroke-width="4.6" /><line x1="211.5" y1="481" x2="232" y2="458" stroke="#c6c6c6" stroke-width="3.2" />
<line x1="6" y1="487" x2="58" y2="492" stroke="#777" stroke-width="1.1" />
<line x1="180" y1="480" x2="212" y2="482" stroke="#777" stroke-width="1.1" />
<line x1="180" y1="468" x2="225" y2="466" stroke="#777" stroke-width="1.1" />
<line x1="226" y1="470" x2="226" y2="520" stroke="#777" stroke-width="1.1" />
<line x1="229" y1="472" x2="229" y2="521" stroke="#777" stroke-width="1.1" />
<line x1="319" y1="486" x2="336" y2="461.5" stroke="#6a6a6a" stroke-width="4.6" /><line x1="319" y1="486" x2="336" y2="461.5" stroke="#c6c6c6" stroke-width="3.2" />
<line x1="336" y1="461.5" x2="399" y2="446" stroke="#6a6a6a" stroke-width="4.2" /><line x1="336" y1="461.5" x2="399" y2="446" stroke="#c6c6c6" stroke-width="2.8" />
<line x1="324.5" y1="488" x2="324.5" y2="545" stroke="#6a6a6a" stroke-width="3.2" /><line x1="324.5" y1="488" x2="324.5" y2="545" stroke="#c6c6c6" stroke-width="1.8" />
<line x1="347.5" y1="462" x2="348" y2="522" stroke="#6a6a6a" stroke-width="3" /><line x1="347.5" y1="462" x2="348" y2="522" stroke="#c6c6c6" stroke-width="1.6" />
<line x1="392.5" y1="449" x2="392.5" y2="507" stroke="#6a6a6a" stroke-width="3" /><line x1="392.5" y1="449" x2="392.5" y2="507" stroke="#c6c6c6" stroke-width="1.6" />
<line x1="349" y1="473" x2="392" y2="461" stroke="#777" stroke-width="1.1" />
<line x1="349" y1="486" x2="392" y2="474" stroke="#777" stroke-width="1.1" />
<line x1="334" y1="470" x2="334" y2="530" stroke="#777" stroke-width="1.1" />
<polygon points="158.2,310.4 165,305 175,297 186.8,289.2 200,283 218.6,277.5 232,275.6 244,275 275,274.8 303.5,275.4 335.3,278.6 367,288 388.3,298.8 402.1,308.6 333.2,313.2 160,313.2" fill="#a80000"/>
<polygon points="254.5,311 254.5,288 265,284.5 284,289 307,300 326,311.5" fill="#ecd2a0"/>
<polyline points="166,314 170.9,311 184,300.5 197.4,292.4 211,286.5 225,282.8 246.2,280.7 265.3,282 284.4,287.1 307.7,298.3 324.7,309.4 331,314" fill="none" stroke="#808080" stroke-width="5.2" stroke-linejoin="round"/>
<line x1="211.9" y1="291" x2="211.9" y2="313" stroke="#808080" stroke-width="3.8" />
<line x1="213.3" y1="292.4" x2="246.2" y2="312" stroke="#808080" stroke-width="3.8" />
<line x1="252.6" y1="284" x2="252.6" y2="313" stroke="#808080" stroke-width="3.8" />
<line x1="256.8" y1="311.5" x2="290.8" y2="292.4" stroke="#808080" stroke-width="3.8" />
<line x1="279.1" y1="292.4" x2="279.1" y2="311" stroke="#808080" stroke-width="3.8" />
<line x1="294" y1="291.5" x2="294" y2="313" stroke="#808080" stroke-width="3.8" />
<line x1="295" y1="294.5" x2="324.7" y2="311" stroke="#808080" stroke-width="3.8" />
<line x1="317.3" y1="304" x2="317.3" y2="311" stroke="#808080" stroke-width="2" />
<polygon points="167,311.2 334,312.8 402,309.6 402,315 334,320.5 167,319.6" fill="#808080"/>
<polygon points="168.6,315 176.4,315 184,518.4 175.4,518.4" fill="#808080"/>
<polygon points="238,318 245.6,318 251,500 243.5,500" fill="#808080"/>
<polygon points="334,316 341.6,316 347.8,526 337.4,526" fill="#808080"/>
<polygon points="392.3,314 399.7,314 403,507.6 393,507.6" fill="#808080"/>
<line x1="172" y1="316" x2="179.5" y2="518" stroke="#6e6e6e" stroke-width="0.6" />
<line x1="338" y1="318" x2="342.5" y2="526" stroke="#6e6e6e" stroke-width="0.6" />
<polyline points="158.2,310.4 165,305 175,297 186.8,289.2 200,283 218.6,277.5 232,275.6 244,275 275,274.8 303.5,275.4 335.3,278.6 367,288 388.3,298.8 402.1,308.6" fill="none" stroke="#ff1ad0" stroke-width="1.3"/>
<polyline points="159.8,312.8 166.6,307.4 176.6,299.4 188.4,291.6 201.6,285.4 220.2,279.9 233.6,278 245.6,277.4" fill="none" stroke="#ff1ad0" stroke-width="1"/>
<polyline points="244,275 255,275.4 265.3,276.5 282.3,281.2 303.5,291.3 322.6,304 333.2,313 402.1,309.2" fill="none" stroke="#ff1ad0" stroke-width="1.2"/>
<polyline points="263.3,278.1 280.3,282.8 301.5,292.9 320.6,305.6 331.2,314.6" fill="none" stroke="#ff1ad0" stroke-width=".9"/>
<path d="M158.2 310.4 L160 313 L240 309.5 Q256 292 280 282 Q292 278 304 276.5" fill="none" stroke="#ff1ad0" stroke-width="1" stroke-dasharray="5 2"/>
<path d="M242 311.5 Q258 294 282 284" fill="none" stroke="#ff1ad0" stroke-width=".9" stroke-dasharray="5 2"/>
<path d="M262 279 Q300 276 340 281 Q375 290 399 307" fill="none" stroke="#ff1ad0" stroke-width=".9" stroke-dasharray="5 2"/></svg>
<div class="abs" style="left:1199px;top:0;width:3px;height:905px;background:#fff"></div><div class="abs" style="left:0;top:901.5px;width:1202px;height:4px;background:#fff"></div>
<div class="abs" style="left:4px;top:4px;width:1195px;height:24px;background:#cfcfcf;border-top:1px solid #999"></div>
<div class="abs" style="left:4px;top:4px;width:1.5px;height:897px;background:#666"></div>
<div class="abs" style="left:1198px;top:4px;width:1px;height:897px;background:#999"></div>
<div class="abs" style="left:4px;top:899.5px;width:1195px;height:2px;background:#808080"></div>
<div class="abs" style="left:5px;top:5px;width:71px;height:23px;background:linear-gradient(#fff 85%,#f1ece2);line-height:24px;padding-left:9px;font-size:12px;letter-spacing:-.5px">3D Вид</div>
<svg class="ic" style="left:60.5px;top:13.5px" width="7" height="7" viewBox="0 0 7 7"><path d="M.4 .4L6.6 6.6M6.6 .4L.4 6.6" stroke="#555" stroke-width="1"/></svg>
<div class="abs" style="left:76px;top:5px;width:1px;height:23px;background:#aaa"></div>
<div class="abs" style="left:99px;top:5px;width:1px;height:23px;background:#aaa"></div>
<svg class="ic" style="left:83.5px;top:11.5px" width="9" height="9" viewBox="0 0 9 9"><path d="M4.5 .5V8.5M.5 4.5H8.5" stroke="#444" stroke-width="1.8"/></svg>
<svg class="ic" style="left:1185px;top:13px" width="8" height="7" viewBox="0 0 8 7"><path d="M.8 .8H7.2L4 6Z" fill="none" stroke="#555" stroke-width="1"/></svg>
<div class="panel" style="left:297.5px;top:34.5px;width:609.5px;height:33px;border-radius:3px"></div>
<svg class="ic" style="left:303px;top:40px" width="60" height="24" viewBox="0 0 1202 480.8"><path d="M80 155 L80 338 L262 338 L215 295 Q260 245 320 240 Q362 255 358 312 L340 338 L352 338 Q405 280 398 220 Q380 130 290 120 Q200 118 130 205 Z" fill="#a9a9a9"/><g transform="translate(1120 0) scale(-1 1)"><path d="M80 155 L80 338 L262 338 L215 295 Q260 245 320 240 Q362 255 358 312 L340 338 L352 338 Q405 280 398 220 Q380 130 290 120 Q200 118 130 205 Z" fill="#a9a9a9"/></g></svg>
<svg class="ic" style="left:300px;top:36px" width="160" height="30" viewBox="0 0 1202 225.4"><path d="M568 95 H628 V172 H568 Z M568 95 L602 58 H660 M602 58 V135 L568 172 M602 135 H628" fill="none" stroke="#64788c" stroke-width="8" stroke-linejoin="round"/><path d="M628 99 H688 V173 H628 Z M634 92 L662 57 H713 L687 92 Z M695 99 L715 68 V138 L695 170 Z" fill="#64788c"/><path d="M1040 70 L1058 52 H1102 V84 H1050 Z" fill="#fff" stroke="#64788c" stroke-width="6" stroke-linejoin="round"/><path d="M955 68 H1040 L1052 82 H1104 V171 H955 Z" fill="#64788c"/></svg>
<div class="tsep" style="left:365px"></div>
<svg class="ic" style="left:405.7px;top:49.5px" width="8" height="6" viewBox="0 0 8 6" ><path d="M0.6 0.3h6.8L4 5.8z" fill="#111"/></svg>
<div class="tsep" style="left:418px"></div>
<svg class="ic" style="left:460px;top:36px" width="160" height="30" viewBox="0 0 1202 225.4"><path d="M15 55 H112 L135 78 V171 H15 Z" fill="#64788c"/><rect x="30" y="100" width="90" height="62" fill="#fff"/><rect x="82" y="61" width="16" height="27" fill="#fff"/><path d="M385 55 H445 L480 90 V171 H385 Z" fill="#64788c"/><path d="M445 55 V90 H480 Z" fill="#fff" stroke="#64788c" stroke-width="5" stroke-linejoin="round"/><path d="M420 100 H485 V75 L526 118 L485 161 V136 H420 Z" fill="#64788c" stroke="#e8ecef" stroke-width="6" stroke-linejoin="miter"/><path d="M766 58 H808 L830 80 V100 H766 Z" fill="#fff" stroke="#64788c" stroke-width="6" stroke-linejoin="round"/><rect x="722" y="92" width="134" height="70" rx="8" fill="#64788c"/><rect x="748" y="132" width="84" height="18" fill="#e8ecef"/><rect x="755" y="150" width="70" height="36" fill="#64788c"/><rect x="748" y="146" width="84" height="5" fill="#fff"/></svg>
<svg class="ic" style="left:490.5px;top:49.5px" width="8" height="6" viewBox="0 0 8 6" ><path d="M0.6 0.3h6.8L4 5.8z" fill="#111"/></svg>
<svg class="ic" style="left:538.6px;top:49.5px" width="8" height="6" viewBox="0 0 8 6" ><path d="M0.6 0.3h6.8L4 5.8z" fill="#111"/></svg>
<div class="tsep" style="left:583.4px"></div>
<svg class="ic" style="left:590px;top:40px" width="26" height="23" viewBox="0 0 26 23" ><g fill="#fff" stroke="#64788c" stroke-width="1.3"><circle cx="5.7" cy="9.7" r="4.6"/><circle cx="20.3" cy="9.7" r="4.6"/><circle cx="13" cy="5.2" r="5.7"/></g><circle cx="13" cy="15" r="7.1" fill="#fff" stroke="#64788c" stroke-width="1.7"/><path d="M11.6 10.4 C15 9.6 17.4 12.4 16.6 15.4 L15.2 14.8 C15.4 17.6 12.6 19.2 10.6 18.4 C9 17.6 8.4 16 9.4 13.8 L10.6 14.6 Z" fill="#64788c"/><path d="M7.6 11.2 L11.8 10.2 L10.4 14.4 Z M18.2 18.6 L14.2 19.8 L15.4 15.6 Z" fill="#64788c"/></svg>
<svg class="ic" style="left:623.5px;top:49.5px" width="8" height="6" viewBox="0 0 8 6" ><path d="M0.6 0.3h6.8L4 5.8z" fill="#111"/></svg>
<div class="tsep" style="left:636px"></div>
<svg class="ic" style="left:620px;top:36px" width="160" height="30" viewBox="0 0 1202 225.4"><path d="M210 48 L232 50 L292 148 L276 158 Z M314 48 L292 50 L232 148 L248 158 Z" fill="#64788c"/><circle cx="232" cy="160" r="17" fill="none" stroke="#64788c" stroke-width="8"/><circle cx="292" cy="160" r="17" fill="none" stroke="#64788c" stroke-width="8"/></svg>
<svg class="ic" style="left:678px;top:40.8px" width="18" height="19" viewBox="0 0 18 19" ><path d="M0.6 0.6 H6.6 L9.6 3.6 V13.2 H0.6 Z" fill="#fff" stroke="#64788c" stroke-width="1.2"/><path d="M7.4 5.6 H13.6 L17 9 V18.2 H7.4 Z" fill="#fff" stroke="#64788c" stroke-width="1.2"/></svg>
<svg class="ic" style="left:711px;top:40.4px" width="18" height="19.5" viewBox="0 0 18 19.5" ><path d="M0 2.6 H4 V1 H6 V0 H8 V1 H10 V2.6 H13.6 V17 H0 Z" fill="#a9a9a9"/><path d="M7.4 6.6 H13.6 L17 10 V18.6 H7.4 Z" fill="#fff" stroke="#a9a9a9" stroke-width="1.2"/></svg>
<svg class="ic" style="left:740.4px;top:49.5px" width="8" height="6" viewBox="0 0 8 6" ><path d="M0.6 0.3h6.8L4 5.8z" fill="#111"/></svg>
<div class="tsep" style="left:752.8px"></div>
<svg class="ic" style="left:750px;top:36px" width="160" height="30" viewBox="0 0 1202 225.4"><path d="M82 35 H128 L135 25 H155 L158 30 V80 H82 Z" fill="#64788c"/><path d="M158 58 H177 V150 H195 M177 92 H195" fill="none" stroke="#64788c" stroke-width="6"/><rect x="196" y="63" width="49" height="54" fill="#fff" stroke="#64788c" stroke-width="6"/><path d="M220 63 V117 M220 90 H245" stroke="#64788c" stroke-width="6"/><rect x="196" y="131" width="49" height="58" fill="#fff" stroke="#64788c" stroke-width="6"/><rect x="231" y="150" width="14" height="14" fill="#64788c"/><path d="M420 62 L438 46 H540 V90 H420 Z" fill="#fff" stroke="#64788c" stroke-width="7" stroke-linejoin="round"/><path d="M401 80 L419 63 H524 V100 H401 Z" fill="#fff" stroke="#64788c" stroke-width="7" stroke-linejoin="round"/><path d="M383 97 L401 80 H508 V110 H383 Z" fill="#fff" stroke="#64788c" stroke-width="7" stroke-linejoin="round"/><path d="M486 100 L540 84 V110 L486 182 Z" fill="#64788c" stroke="#64788c" stroke-width="5" stroke-linejoin="round"/><rect x="366" y="97" width="113" height="85" fill="#fff" stroke="#64788c" stroke-width="8"/><rect x="402" y="130" width="36" height="22" fill="#fff" stroke="#64788c" stroke-width="7"/><path d="M752 160 L826 84" stroke="#64788c" stroke-width="28" stroke-linecap="round"/><circle cx="842" cy="72" r="37" fill="#64788c"/><path d="M846 68 L892 22" stroke="#e8ecef" stroke-width="27"/><circle cx="751" cy="161" r="6" fill="#e8ecef"/><circle cx="1043" cy="112" r="68" fill="#64788c"/><text x="1043" y="150" font-size="104" font-weight="bold" text-anchor="middle" fill="#fff" font-family="Liberation Sans,sans-serif">?</text></svg>
<div class="tsep" style="left:790.4px"></div>
<svg class="ic" style="left:830.4px;top:49.5px" width="8" height="6" viewBox="0 0 8 6" ><path d="M0.6 0.3h6.8L4 5.8z" fill="#111"/></svg>
<div class="abs" style="left:425px;top:208px;width:607px;height:512px;background:#e8ecef;border:1px solid #4c4c4c"></div>
<div class="abs" style="left:426px;top:209px;width:605px;height:30px;background:#fff"></div>
<svg class="ic" style="left:434.6px;top:214.6px" width="15" height="17" viewBox="0 0 15 17"><path d="M7.5 1.2L13.9 4.8V12.2L7.5 15.8L1.1 12.2V4.8Z" fill="#fff" stroke="#64788c" stroke-width="2"/><path d="M7.5 4L11.4 6.2V10.8L7.5 13L3.6 10.8V6.2Z" fill="#f2565c"/><path d="M7.5 8.5V4M7.5 8.5L3.6 10.8M7.5 8.5L11.4 10.8" stroke="#fff" stroke-width=".8" fill="none"/></svg>
<div class="abs" style="left:455.5px;top:209px;height:30px;line-height:30px;font-size:12px">Стили балки</div>
<svg class="ic" style="left:1010.5px;top:217.5px" width="11" height="11" viewBox="0 0 11 11"><path d="M.5 .5L10.5 10.5M10.5 .5L.5 10.5" stroke="#111" stroke-width="1.1"/></svg>
<svg class="ic" style="left:727px;top:221px" width="13" height="21" viewBox="0 0 13 21"><path d="M.6 .8V17L4.4 13.4L7 19.6L9.4 18.6L6.8 12.6H12Z" fill="#fff" stroke="#111" stroke-width="1"/></svg>
<svg class="ic" style="left:448px;top:250px" width="11" height="11" viewBox="0 0 11 11"><path d="M5.5 0V11M0 5.5H11" stroke="#64788c" stroke-width="2.8"/></svg>
<svg class="ic" style="left:478px;top:248px" width="15" height="15" viewBox="0 0 15 15"><rect x="0" y="0" width="10" height="10" fill="#64788c"/><rect x="5.2" y="5.2" width="8.8" height="8.8" fill="#fff" stroke="#64788c" stroke-width="1.8"/></svg>
<svg class="ic" style="left:514.5px;top:250px" width="12" height="11" viewBox="0 0 12 11"><path d="M0 11L.8 7.6L7.6 .8Q8.6 0 9.6 .8L10.8 2Q11.6 3 10.8 4L4 10.4Z" fill="#64788c"/><path d="M7 2L9.6 4.6" stroke="#e8ecef" stroke-width=".8"/></svg>
<svg class="ic" style="left:547px;top:250.5px" width="11" height="10" viewBox="0 0 11 10"><path d="M1.2 .8L9.8 9.2M9.8 .8L1.2 9.2" stroke="#64788c" stroke-width="3.2"/></svg>
<div class="abs" style="left:437px;top:273px;width:200px;height:396.5px;background:#fff;border:1px solid #a9b7c4;overflow:hidden">
<div class="li" style="top:0px">С 20</div>
<div class="li" style="top:24px">I 20B1</div>
<div class="li" style="top:48px">L 200x12</div>
<div class="li" style="top:72px">T 20Б1</div>
<div class="li" style="top:96px">Б1 Двутавр сборн. * 320х960</div>
<div class="li" style="top:120px">Водосточная Труба * d50 мм</div>
<div class="li" style="top:144px">Водосточная труба * d100 мм</div>
<div class="li" style="top:168px">Газон * (выход из подвала 1500)</div>
<div class="li" style="top:192px">Газон * (выход из подвала 1840)</div>
<div class="li" style="top:216px">Газон * (выход из приямка 4100)</div>
<div class="li" style="top:240px">Газон-земля * (6000)</div>
<div class="li" style="top:264px">Квадратная * 150х150</div>
<div class="li" style="top:288px">Козырек* (1,5)</div>
<div class="li" style="top:312px;background:#c9d0d7">Козырек* (2,25)</div>
<div class="li" style="top:336px;letter-spacing:0">Металлочерепица * для козырька</div>
<div class="li" style="top:360px">Отмостка (1000 мм)</div>
<div class="li" style="top:384px">Прогон * (120x220)</div>
<div class="abs" style="left:189px;top:0;width:10px;height:394px;background:#f2f4f6"></div>
<div class="abs" style="left:190px;top:1px;width:8px;height:173px;background:#c9d0d7"></div>
</div>
<div class="cmb" style="left:646px;top:246px;width:122px;padding-left:3.5px;letter-spacing:0">Прямоугольник<span class="a"></span></div>
<div class="cmb" style="left:950.5px;top:246px;width:69.5px;padding-left:2.5px">Авто<span class="a"></span></div>
<div class="abs" style="left:646px;top:273px;width:374.5px;height:140px;background:#fff;border:1px solid #a9b7c4"></div>
<svg class="ic" style="left:662px;top:337px" width="342" height="12" viewBox="0 0 342 12"><defs><pattern id="bh" width="8" height="8" patternUnits="userSpaceOnUse"><path d="M-1 -1L9 9" stroke="#b4b4b4" stroke-width=".8"/></pattern></defs><rect x="2.8" y="2.5" width="336.4" height="6.8" rx="1" fill="#fff"/><rect x="2.8" y="2.5" width="336.4" height="6.8" rx="1" fill="url(#bh)" stroke="#000" stroke-width="2"/></svg>
<div class="abs" style="left:729px;top:422px;width:71px;height:24px;background:#c9d0d7;border:1px solid #b3bfcb;line-height:25px;text-align:center;font-size:12.5px;letter-spacing:-.3px">Свойства</div>
<div class="abs" style="left:646px;top:445px;width:374.5px;height:224.5px;background:#e8ecef;border:1px solid #a9b7c4"></div>
<div class="abs" style="left:646px;top:422px;width:84px;height:24px;background:#e8ecef;border:1px solid #a9b7c4;border-bottom:none;line-height:24px;text-align:center;font-size:12.5px;letter-spacing:-.2px">Параметры</div>
<div class="abs" style="left:656px;top:455px;width:353.5px;height:205px;background:#fff;border:1px solid #a9b7c4"></div>
<div class="cell" style="left:657px;top:456px;width:180px;background:#efefef;border-bottom:1px solid #a9b7c4;border-right:1px solid #a9b7c4;padding-left:9px">Параметр</div>
<div class="cell" style="left:837px;top:456px;width:171.5px;background:#efefef;border-bottom:1px solid #a9b7c4;padding-left:9px">Значение</div>
<div class="cell" style="left:657px;top:481px;width:180px;background:#e8ecef;border-bottom:1px solid #cfd6dd;border-right:1px solid #cfd6dd;padding-left:6.5px">Высота</div>
<div class="cell" style="left:837px;top:481px;width:171.5px;background:#fff;border-bottom:1px solid #cfd6dd;padding-left:7px"><span class="n">46,00</span><span style="position:absolute;right:7px;color:#999">мм</span></div>
<div class="cell" style="left:657px;top:506px;width:180px;background:#e8ecef;border-bottom:1px solid #cfd6dd;border-right:1px solid #cfd6dd;padding-left:6.5px">Ширина</div>
<div class="cell" style="left:837px;top:506px;width:171.5px;background:#fff;border-bottom:1px solid #cfd6dd;padding-left:7px"><span class="n">2 250,00</span><span style="position:absolute;right:7px;color:#999">мм</span></div>
<div class="btn" style="left:851px">OK</div><div class="btn" style="left:940px">Отмена</div>
<div class="panel" style="left:1047px;top:34px;width:145px;height:314px"><div class="ptitle" style="top:7px">Инструменты</div></div>
<div class="abs" style="left:1054.5px;top:63.5px;width:31px;height:29px;background:#c9d0d7;border-radius:3px"></div>
<svg class="ic" style="left:1050px;top:60px" width="140" height="96" viewBox="0 0 1202 824.2"><path d="M132 84 L132 196 L159 171 L180 212 L198 203 L178 162 L212 158 Z" fill="#e6eaee" stroke="#64788c" stroke-width="9" stroke-linejoin="round"/><circle cx="490" cy="120" r="48" fill="#fff" stroke="#64788c" stroke-width="8"/><path d="M490 120 V72 A48 48 0 0 1 538 120 Z M490 120 V168 A48 48 0 0 1 442 120 Z" fill="#64788c"/><circle cx="425" cy="183" r="52" fill="#fff" stroke="#64788c" stroke-width="8"/><text x="425" y="208" font-size="74" font-weight="bold" text-anchor="middle" fill="#64788c" font-family="Liberation Sans,sans-serif">A</text><path d="M656 96 L676 78 L825 78 L825 210 L805 228 L805 96 Z" fill="#64788c"/><path d="M656 96 L676 78 L825 78 L825 210 L805 228 L805 96 Z" fill="none" stroke="#64788c" stroke-width="5.4" stroke-linejoin="round"/><rect x="656" y="96" width="149" height="132" fill="#fff" stroke="#64788c" stroke-width="9"/><path d="M998 96 L1017 78 L1055 78 L1055 210 L1036 228 L1036 96 Z" fill="#64788c"/><path d="M998 96 L1017 78 L1055 78 L1055 210 L1036 228 L1036 96 Z" fill="none" stroke="#64788c" stroke-width="5.4" stroke-linejoin="round"/><rect x="998" y="96" width="38" height="132" fill="#fff" stroke="#64788c" stroke-width="9"/><path d="M70 434 L126 378 L275 378 L275 412 L218 468 L218 434 Z" fill="#64788c" stroke="#64788c" stroke-width="5" stroke-linejoin="round"/><rect x="72" y="436" width="146" height="32" fill="#fff" stroke="#64788c" stroke-width="8"/><path d="M354 434 L410 378 L558 378 L558 412 L502 468 L502 434 Z" fill="#64788c" stroke="#64788c" stroke-width="5" stroke-linejoin="round"/><path d="M398 424 L428 394 L520 394 L490 424 Z" fill="#fff"/><path d="M428 394 L428 410 L505 410 L520 394" fill="#64788c" opacity=".35"/><rect x="356" y="436" width="146" height="32" fill="#fff" stroke="#64788c" stroke-width="8"/><path d="M722 410 L768 364 L840 432 L788 486 Z" fill="#64788c" stroke="#64788c" stroke-width="5" stroke-linejoin="round"/><path d="M668 478 L720 432 L762 478 Z" fill="#fff" stroke="#64788c" stroke-width="7" stroke-linejoin="round"/><g fill="none" stroke="#64788c" stroke-width="6" stroke-linejoin="round" stroke-linecap="round"><path d="M638 482 L760 362 M652 484 L770 368"/></g><path d="M963 448 L1055 355 L1088 355 L1090 392 L997 486 L997 448 Z" fill="#64788c" stroke="#64788c" stroke-width="5" stroke-linejoin="round"/><path d="M997 448 L1086 358" stroke="#e8ecef" stroke-width="4" fill="none"/><rect x="964" y="449" width="33" height="37" fill="#fff" stroke="#64788c" stroke-width="8"/><polygon points="95,662 137,618 178,618 189,629 189,644 217,645 228,669 251,671 258,682 258,710 214,753 176,753 95,685" fill="#64788c" stroke="#64788c" stroke-width="4" stroke-linejoin="round"/><polygon points="103,671 137,671 137,693 172,693 172,720 205,720 205,746 181,746 103,682" fill="#fff"/><path d="M138 667 L180 623 M174 693 L217 648 M208 720 L251 675" stroke="#e8ecef" stroke-width="3.4" stroke-dasharray="7 4" fill="none"/><path d="M372 673 L418 628 L542 688 L498 742 Z" fill="#64788c" stroke="#64788c" stroke-width="5" stroke-linejoin="round"/><path d="M373 676 L373 742 L495 742 Z" fill="#fff" stroke="#64788c" stroke-width="8" stroke-linejoin="round"/><path d="M682 620 L699 603 L805 603 L805 743 L788 760 L788 620 Z" fill="#64788c"/><path d="M682 620 L699 603 L805 603 L805 743 L788 760 L788 620 Z" fill="none" stroke="#64788c" stroke-width="5.4" stroke-linejoin="round"/><rect x="682" y="620" width="106" height="140" fill="#fff" stroke="#64788c" stroke-width="9"/><g fill="none" stroke="#64788c" stroke-width="8" stroke-linejoin="round" stroke-linecap="round"><rect x="702" y="640" width="66" height="103"/><path d="M752 690 H766"/></g><path d="M964 628 L982 612 L1090 612 L1090 736 L1072 752 L1072 628 Z" fill="#64788c"/><path d="M964 628 L982 612 L1090 612 L1090 736 L1072 752 L1072 628 Z" fill="none" stroke="#64788c" stroke-width="5.4" stroke-linejoin="round"/><rect x="964" y="628" width="108" height="124" fill="#fff" stroke="#64788c" stroke-width="9"/><g fill="none" stroke="#64788c" stroke-width="8" stroke-linejoin="round" stroke-linecap="round"><rect x="985" y="650" width="66" height="80"/><path d="M1020 650 V730 M1020 684 H1051"/></g></svg>
<svg class="ic" style="left:1050px;top:154px" width="140" height="96" viewBox="0 0 1202 824.2"><rect x="78" y="88" width="188" height="38" rx="8" fill="#fff" stroke="#64788c" stroke-width="7"/><path d="M82 90 H262 Q266 98 258 106 H86 Q78 98 82 90Z" fill="#64788c"/><g fill="none" stroke="#64788c" stroke-width="7" stroke-linejoin="round" stroke-linecap="round"><path d="M96 126 V205 Q105 214 114 205 V126 M152 126 V205 Q160 212 168 205 V126 M180 126 V190 M222 126 V205 Q231 214 240 205 V126 M114 160 H222 M114 172 H222"/></g><g fill="none" stroke="#64788c" stroke-width="10" stroke-linejoin="round" stroke-linecap="round"><path d="M390 210 L520 80"/></g><path d="M672 172 L702 140 L805 140 L805 196 L775 228 L775 172 Z" fill="#64788c"/><path d="M672 172 L702 140 L805 140 L805 196 L775 228 L775 172 Z" fill="none" stroke="#64788c" stroke-width="5.4" stroke-linejoin="round"/><rect x="672" y="172" width="103" height="56" fill="#fff" stroke="#64788c" stroke-width="9"/><path d="M710 80 L728 62 L770 62 L770 148 L752 166 L752 80 Z" fill="#64788c"/><path d="M710 80 L728 62 L770 62 L770 148 L752 166 L752 80 Z" fill="none" stroke="#64788c" stroke-width="5.4" stroke-linejoin="round"/><rect x="710" y="80" width="42" height="86" fill="#fff" stroke="#64788c" stroke-width="9"/><path d="M930 158 L992 88 L1115 88 L1115 152 L1098 172 L1005 172 L968 212 L930 212 Z" fill="#64788c" stroke="#64788c" stroke-width="6" stroke-linejoin="round"/><rect x="934" y="166" width="31" height="43" fill="#fff"/><path d="M966 164 L1012 110 L1096 110" fill="none" stroke="#e8ecef" stroke-width="7"/><path d="M185 312 L210 318 L212 380 L190 385 Z" fill="#64788c"/><g fill="none" stroke="#64788c" stroke-width="7" stroke-linejoin="round" stroke-linecap="round"><ellipse cx="168" cy="347" rx="27" ry="38" fill="#fff"/><ellipse cx="133" cy="403" rx="45" ry="20" fill="#fff"/><path d="M90 410 Q95 440 125 445 L120 470 Q140 480 160 470 L158 440"  fill="#fff"/><ellipse cx="205" cy="430" rx="48" ry="22" fill="#fff"/><path d="M158 438 Q165 470 190 478 L185 500 Q210 512 240 500 L238 478 Q255 465 253 435" fill="#fff"/></g><path d="M382 346 L404 328 L527 328 L527 474 L505 492 L505 346 Z" fill="#64788c"/><path d="M382 346 L404 328 L527 328 L527 474 L505 492 L505 346 Z" fill="none" stroke="#64788c" stroke-width="5.4" stroke-linejoin="round"/><rect x="382" y="346" width="123" height="146" fill="#fff" stroke="#64788c" stroke-width="9"/><g fill="none" stroke="#64788c" stroke-width="7" stroke-linejoin="round" stroke-linecap="round"><circle cx="445" cy="426" r="46"/></g><circle cx="445" cy="426" r="32" fill="#64788c"/><circle cx="462" cy="420" r="12" fill="#fff"/><rect x="392" y="353" width="30" height="10" fill="#64788c"/><circle cx="486" cy="362" r="6" fill="#64788c"/><path d="M690 415 L770 372 L805 382 L805 420 L748 478 L700 478 Z" fill="#64788c"/><path d="M680 340 V398 L736 370 Z M800 338 V398 L744 370 Z" fill="#64788c" stroke="#64788c" stroke-width="5" stroke-linejoin="round"/><rect x="722" y="357" width="36" height="28" fill="#fff" stroke="#64788c" stroke-width="6"/><circle cx="716" cy="441" r="36" fill="#fff" stroke="#64788c" stroke-width="8"/><circle cx="716" cy="441" r="21" fill="#64788c"/><path d="M998 348 Q1000 400 960 440 Q960 490 1000 492 Q1070 440 1072 350 Z" fill="#fff" stroke="#64788c" stroke-width="7" stroke-linejoin="round"/><path d="M1050 365 Q1060 420 1020 480 Q1068 440 1072 352 Z" fill="#64788c"/><ellipse cx="1035" cy="349" rx="37" ry="18" fill="#fff" stroke="#64788c" stroke-width="7"/><ellipse cx="1035" cy="349" rx="18" ry="8" fill="#64788c"/><circle cx="990" cy="458" r="36" fill="#fff" stroke="#64788c" stroke-width="8"/><circle cx="990" cy="458" r="21" fill="#64788c"/><g transform="translate(0 0) scale(1)"><path d="M112 638 H176 L203 658 L170 700 L140 665Z" fill="#fff"/><path d="M140.5 665 Q126 682 104.6 681 Q70 677 71.4 653 Q73 640 86 629 L123 593 Q142 579 160 593 Q176 613 158 632" fill="#fff" stroke="#64788c" stroke-width="8" stroke-linecap="round"/><path d="M112.6 638.5 H176 Q195 641 203 658" fill="none" stroke="#64788c" stroke-width="8" stroke-linecap="round"/></g><g fill="none" stroke="#64788c" stroke-width="8" stroke-linejoin="round" stroke-linecap="round"><circle cx="115" cy="722" r="27" fill="#fff"/><circle cx="210" cy="715" r="52" fill="#fff"/></g><path d="M115 708 V736 M101 722 H129" stroke="#64788c" stroke-width="8"/><circle cx="115" cy="722" r="9" fill="#64788c"/><path d="M210 680 Q236 720 228 735 Q210 756 192 735 Q184 720 210 680Z" fill="#64788c"/><path d="M382 622 L404 604 L527 604 L527 732 L505 750 L505 622 Z" fill="#64788c"/><path d="M382 622 L404 604 L527 604 L527 732 L505 750 L505 622 Z" fill="none" stroke="#64788c" stroke-width="5.4" stroke-linejoin="round"/><rect x="382" y="622" width="123" height="128" fill="#fff" stroke="#64788c" stroke-width="9"/><g fill="none" stroke="#64788c" stroke-width="7" stroke-linejoin="round" stroke-linecap="round"><circle cx="445" cy="686" r="47"/></g><path d="M445 686 Q420 650 450 645 Q470 650 445 686 Q482 660 487 692 Q480 712 445 686 Q470 722 440 727 Q420 722 445 686 Q408 712 403 680 Q410 660 445 686Z" fill="#64788c"/><g fill="none" stroke="#64788c" stroke-width="7" stroke-linejoin="round" stroke-linecap="round"><ellipse cx="783" cy="640" rx="22" ry="46" transform="rotate(-48 783 640)" fill="#fff"/><ellipse cx="757" cy="662" rx="30" ry="62" transform="rotate(-48 757 662)" fill="#fff"/><ellipse cx="733" cy="684" rx="30" ry="62" transform="rotate(-48 733 684)" fill="#fff"/><ellipse cx="712" cy="703" rx="24" ry="50" transform="rotate(-48 712 703)" fill="#fff"/><circle cx="697" cy="718" r="34" fill="#fff"/></g><circle cx="695" cy="720" r="18" fill="#64788c"/><path d="M965 700 L1010 655 L1022 610 L1050 595 L1090 595 L1088 690 L1030 760 L1030 700 Z" fill="#fff" stroke="#64788c" stroke-width="8" stroke-linejoin="round"/><path d="M1030 700 L1068 660 L1088 600 L1088 690 L1030 760 Z" fill="#64788c"/><path d="M1022 612 L1050 598 L1086 598 L1060 614 Z" fill="#64788c" opacity=".0"/><rect x="965" y="700" width="65" height="60" fill="#fff" stroke="#64788c" stroke-width="8"/><rect x="982" y="716" width="30" height="30" fill="#64788c"/></svg>
<svg class="ic" style="left:1050px;top:248px" width="140" height="96" viewBox="0 0 1202 824.2"><defs><pattern id="dh" width="20" height="20" patternUnits="userSpaceOnUse"><rect width="20" height="20" fill="#fff"/><path d="M-2 22 L22 -2 M-12 12 L12 -12 M8 32 L32 8" stroke="#64788c" stroke-width="3.4"/></pattern><pattern id="xh" width="24" height="24" patternUnits="userSpaceOnUse"><rect width="24" height="24" fill="#fff"/><path d="M-2 26 L26 -2 M-2 -2 L26 26" stroke="#64788c" stroke-width="3.6"/></pattern></defs><g transform="translate(0 -541) scale(1)"><path d="M112 638 H176 L203 658 L170 700 L140 665Z" fill="#fff"/><path d="M140.5 665 Q126 682 104.6 681 Q70 677 71.4 653 Q73 640 86 629 L123 593 Q142 579 160 593 Q176 613 158 632" fill="#fff" stroke="#64788c" stroke-width="8" stroke-linecap="round"/><path d="M112.6 638.5 H176 Q195 641 203 658" fill="none" stroke="#64788c" stroke-width="8" stroke-linecap="round"/></g><g fill="none" stroke="#64788c" stroke-width="8" stroke-linejoin="round" stroke-linecap="round"><circle cx="115" cy="185" r="27" fill="#fff"/><circle cx="212" cy="176" r="52" fill="#fff"/></g><path d="M115 171 V199 M101 185 H129" stroke="#64788c" stroke-width="8"/><circle cx="115" cy="185" r="9" fill="#64788c"/><path d="M212 176 Q186 140 218 134 Q240 140 212 176 Q250 150 254 182 Q246 204 212 176 Q238 214 206 218 Q186 212 212 176 Q174 204 170 170 Q178 150 212 176Z" fill="#64788c"/><rect x="204" y="168" width="16" height="16" fill="#fff" stroke="#64788c" stroke-width="4"/><path d="M372 215 V105 L458 42 L540 105 V215 Z" fill="#fff" stroke="#64788c" stroke-width="11" stroke-linejoin="round"/><path d="M458 42 L470 38 L546 98 V212 L540 215 V105 Z" fill="#64788c" stroke="#64788c" stroke-width="5" stroke-linejoin="round"/><g fill="none" stroke="#64788c" stroke-width="8" stroke-linejoin="round" stroke-linecap="round"><path d="M432 168 Q405 130 425 105 Q450 80 476 105 Q495 130 468 168 Z M434 182 H466 M438 196 H462"/></g><g transform="translate(588 -445) scale(0.86)"><path d="M112 638 H176 L203 658 L170 700 L140 665Z" fill="#fff"/><path d="M140.5 665 Q126 682 104.6 681 Q70 677 71.4 653 Q73 640 86 629 L123 593 Q142 579 160 593 Q176 613 158 632" fill="#fff" stroke="#64788c" stroke-width="8" stroke-linecap="round"/><path d="M112.6 638.5 H176 Q195 641 203 658" fill="none" stroke="#64788c" stroke-width="8" stroke-linecap="round"/></g><g fill="none" stroke="#64788c" stroke-width="7" stroke-linejoin="round" stroke-linecap="round"><path d="M728 92 L745 48 M722 70 L760 62 M735 95 L758 85"/></g><g fill="none" stroke="#64788c" stroke-width="8" stroke-linejoin="round" stroke-linecap="round"><circle cx="680" cy="188" r="24" fill="#fff"/><circle cx="778" cy="178" r="52" fill="#fff"/></g><circle cx="680" cy="188" r="8" fill="#64788c"/><path d="M790 135 L755 182 L776 182 L762 222 L802 170 L780 170 Z" fill="#64788c"/><path d="M985 72 L1001 56 L1106 56 L1106 164 L1090 180 L1090 72 Z" fill="#64788c"/><path d="M985 72 L1001 56 L1106 56 L1106 164 L1090 180 L1090 72 Z" fill="none" stroke="#64788c" stroke-width="5.4" stroke-linejoin="round"/><rect x="985" y="72" width="105" height="108" fill="#fff" stroke="#64788c" stroke-width="9"/><path d="M940 100 L954 88 L1062 88 L1062 206 L1048 218 L1048 100 Z" fill="#64788c"/><path d="M940 100 L954 88 L1062 88 L1062 206 L1048 218 L1048 100 Z" fill="none" stroke="#64788c" stroke-width="5.4" stroke-linejoin="round"/><rect x="940" y="100" width="108" height="118" fill="#fff" stroke="#64788c" stroke-width="9"/><g fill="none" stroke="#64788c" stroke-width="7" stroke-linejoin="round" stroke-linecap="round"><circle cx="1000" cy="160" r="42"/></g><circle cx="982" cy="160" r="8" fill="#64788c"/><circle cx="1018" cy="160" r="8" fill="#64788c"/><path d="M106 336 L124 320 L246 320 L246 469 L228 485 L228 336 Z" fill="#64788c"/><path d="M106 336 L124 320 L246 320 L246 469 L228 485 L228 336 Z" fill="none" stroke="#64788c" stroke-width="5.4" stroke-linejoin="round"/><rect x="106" y="336" width="122" height="149" fill="#fff" stroke="#64788c" stroke-width="9"/><rect x="122" y="362" width="90" height="30" fill="#64788c"/><path d="M166 402 L132 468 H202 Z" fill="#64788c"/><path d="M172 420 L152 448 H166 L158 464 L182 438 H168 Z" fill="#fff"/><g fill="none" stroke="#64788c" stroke-width="7" stroke-linejoin="round" stroke-linecap="round"><path d="M450 318 L530 360 V445 L450 488 L372 445 V360 Z M450 338 L508 432 H392 Z M450 318 V338 M530 360 L450 338 L372 360 M530 445 L508 432 L530 360 M372 445 L392 432 L372 360 M450 488 L392 432 M450 488 L508 432"/></g><path d="M665 345 L690 320 L715 345 L775 345 L800 375 V432 L822 432 L800 470 L665 475 Z" fill="#64788c" stroke="#64788c" stroke-width="6" stroke-linejoin="round"/><path d="M680 352 H770 V455 H680 Z" fill="#fff"/><path d="M680 440 H775 L795 448 L780 462 H680Z" fill="#fff"/><circle cx="737" cy="405" r="33" fill="#64788c"/><circle cx="748" cy="394" r="10" fill="#fff"/><path d="M1000 345 L1060 340 V468 L1000 465 Q975 450 975 420 L985 405 L975 390 Q975 360 1000 345 Z" fill="#fff" stroke="#64788c" stroke-width="8" stroke-linejoin="round"/><path d="M1044 342 L1062 340 V470 L1044 466 Z" fill="#64788c"/><g fill="none" stroke="#64788c" stroke-width="6" stroke-linejoin="round" stroke-linecap="round"><circle cx="990" cy="380" r="9"/><circle cx="990" cy="432" r="9"/></g><g fill="none" stroke="#64788c" stroke-width="7.5" stroke-linejoin="round" stroke-linecap="round"><path d="M72 605 H135 M72 735 H135 M98 615 V725"/><circle cx="205" cy="668" r="66"/><path d="M168 708 L242 628"/></g><path d="M98 606 L86 640 H110 Z M98 734 L86 700 H110 Z M248 622 L236 652 L220 636 Z M162 714 L174 684 L190 700 Z" fill="#64788c"/><g fill="none" stroke="#64788c" stroke-width="7.5" stroke-linejoin="round" stroke-linecap="round"><path d="M388 700 L485 606 M426 732 Q440 650 518 640"/><circle cx="380" cy="708" r="10" fill="#fff"/><circle cx="492" cy="598" r="10" fill="#fff"/><circle cx="425" cy="742" r="10" fill="#fff"/><circle cx="528" cy="638" r="10" fill="#fff"/></g><circle cx="765" cy="692" r="65" fill="url(#xh)" stroke="#64788c" stroke-width="6"/><rect x="648" y="588" width="112" height="102" fill="url(#dh)" stroke="#64788c" stroke-width="7"/><text x="1017" y="736" font-size="196" font-weight="bold" text-anchor="middle" fill="#64788c" font-family="Liberation Serif,serif">T</text></svg>
<div class="panel" style="left:1047px;top:354px;width:145px;height:97px"><div class="ptitle" style="top:7px">Действия</div></div>
<svg class="ic" style="left:1050px;top:380px" width="140" height="66" viewBox="0 0 1202 566.7"><rect x="102" y="112" width="36" height="34" fill="#cf3a3f"/><rect x="155" y="138" width="35" height="34" fill="#64788c"/><rect x="205" y="163" width="35" height="35" fill="#64788c"/><rect x="438" y="78" width="34" height="32" fill="#64788c"/><rect x="438" y="198" width="34" height="34" fill="#cf3a3f"/><path d="M408 102 L431 125 L408 148 L385 125Z" fill="#64788c"/><path d="M503 102 L526 125 L503 148 L480 125Z" fill="#64788c"/><path d="M408 162 L431 185 L408 208 L385 185Z" fill="#64788c"/><path d="M503 162 L526 185 L503 208 L480 185Z" fill="#64788c"/><rect x="670" y="138" width="34" height="34" fill="#cf3a3f"/><rect x="722" y="138" width="34" height="34" fill="#64788c"/><rect x="772" y="138" width="34" height="34" fill="#64788c"/><path d="M962 112 V208 L1012 160Z" fill="#cf3a3f"/><path d="M1092 112 V208 L1040 160Z" fill="#64788c"/><path d="M1026 100 V216" stroke="#111" stroke-width="7" stroke-dasharray="7 7"/><rect x="110" y="360" width="26" height="95" fill="#64788c"/><rect x="138" y="455" width="94" height="26" fill="#cf3a3f"/><path d="M142 378 Q205 380 213 447" fill="none" stroke="#111" stroke-width="6"/><rect x="386" y="447" width="44" height="43" fill="#cf3a3f"/><rect x="482" y="352" width="41" height="41" fill="#64788c"/><path d="M430 446 L462 414" stroke="#111" stroke-width="6"/><path d="M482 394 L472 428 L448 404 Z" fill="#111"/><rect x="730" y="352" width="76" height="76" fill="#64788c"/><rect x="670" y="413" width="76" height="77" fill="#cf3a3f"/><path d="M952 370 H978 V462 H1073 V490 H952 Z" fill="#a6a6a6"/><path d="M1015 352 H1060 L1092 382 V428 H1015 Z M1047 383 a15 15 0 1 0 0.1 0Z" fill="#a6a6a6" fill-rule="evenodd"/></svg>
<div class="panel" style="left:1047px;top:457px;width:145px;height:396px"><div class="ptitle" style="top:7px">Параметры</div></div>
<svg class="ic" style="left:1052px;top:485px" width="40" height="180" viewBox="0 0 201 905"><path d="M52.5 52.7 L92.4 31 L135.7 49.8 L135.7 100.4 L92.4 123.5 L92.4 72.9 Z" fill="#64788c"/><path d="M92.4 72.9 L135.7 49.8" stroke="#e8ecef" stroke-width="3.5"/><path d="M52.5 52.7 L92.4 72.9 L92.4 123.5 L52.5 103.2 Z" fill="#fff" stroke="#64788c" stroke-width="4"/><circle cx="52.5" cy="52.7" r="6.6" fill="#fff" stroke="#64788c" stroke-width="4.4"/><circle cx="72.4" cy="62.8" r="6.6" fill="#fff" stroke="#64788c" stroke-width="4.4"/><circle cx="92.4" cy="72.9" r="6.6" fill="#fff" stroke="#64788c" stroke-width="4.4"/><circle cx="52.5" cy="78" r="6.6" fill="#fff" stroke="#64788c" stroke-width="4.4"/><circle cx="92.4" cy="98.2" r="6.6" fill="#fff" stroke="#64788c" stroke-width="4.4"/><circle cx="52.5" cy="103.2" r="6.6" fill="#fff" stroke="#64788c" stroke-width="4.4"/><circle cx="72.4" cy="113.4" r="6.6" fill="#fff" stroke="#64788c" stroke-width="4.4"/><circle cx="92.4" cy="123.5" r="6.6" fill="#fff" stroke="#64788c" stroke-width="4.4"/><path d="M30.2 108.2 L73.6 86.8 M135.7 51.2 L150.2 44" stroke="#cf3a3f" stroke-width="5"/><rect x="62" y="208.2" width="51.2" height="51.1" fill="#fff" stroke="#64788c" stroke-width="4.4"/><circle cx="62" cy="208.2" r="6.6" fill="#fff" stroke="#64788c" stroke-width="4.4"/><circle cx="87.6" cy="208.2" r="6.6" fill="#fff" stroke="#64788c" stroke-width="4.4"/><circle cx="113.2" cy="208.2" r="6.6" fill="#fff" stroke="#64788c" stroke-width="4.4"/><circle cx="62" cy="233.75" r="6.6" fill="#fff" stroke="#64788c" stroke-width="4.4"/><circle cx="113.2" cy="233.75" r="6.6" fill="#fff" stroke="#64788c" stroke-width="4.4"/><circle cx="62" cy="259.3" r="6.6" fill="#fff" stroke="#64788c" stroke-width="4.4"/><circle cx="87.6" cy="259.3" r="6.6" fill="#fff" stroke="#64788c" stroke-width="4.4"/><circle cx="113.2" cy="259.3" r="6.6" fill="#fff" stroke="#64788c" stroke-width="4.4"/><path d="M86.6 234 H122" stroke="#111" stroke-width="4.6"/><path d="M136 234 L117 223 V245Z" fill="#111"/><rect x="135.7" y="227.5" width="14.5" height="13" fill="#cf3a3f"/><rect x="62.6" y="359.7" width="50.6" height="50.3" fill="#fff" stroke="#64788c" stroke-width="4.4"/><circle cx="62.6" cy="359.7" r="6.6" fill="#fff" stroke="#64788c" stroke-width="4.4"/><circle cx="113.2" cy="359.7" r="6.6" fill="#fff" stroke="#64788c" stroke-width="4.4"/><circle cx="62.6" cy="384.85" r="6.6" fill="#fff" stroke="#64788c" stroke-width="4.4"/><circle cx="113.2" cy="384.85" r="6.6" fill="#fff" stroke="#64788c" stroke-width="4.4"/><circle cx="62.6" cy="410" r="6.6" fill="#fff" stroke="#64788c" stroke-width="4.4"/><circle cx="87.9" cy="410" r="6.6" fill="#fff" stroke="#64788c" stroke-width="4.4"/><circle cx="113.2" cy="410" r="6.6" fill="#fff" stroke="#64788c" stroke-width="4.4"/><path d="M87.7 388 V346" stroke="#111" stroke-width="4.6"/><path d="M87.7 336 L77 352 H98.4Z" fill="#111"/><rect x="80.2" y="322.2" width="15" height="13.5" fill="#cf3a3f"/><rect x="85" y="493" width="46" height="55" fill="#64788c"/><path d="M51 526 H80 V534 H70 V561 H80 V569 H51 V561 H61 V534 H51Z" fill="#64788c"/><circle cx="90" cy="683" r="38" fill="none" stroke="#222" stroke-width="3.5"/><circle cx="90" cy="683" r="4.5" fill="#222"/><path d="M100 640 L128 650 L110 668 Z" fill="#111"/><path d="M118 650 L136 660" stroke="#e8ecef" stroke-width="6"/><path d="M42.3 871.8 L133.7 786 V835.8 L100.4 871.8 Z" fill="#fff" stroke="#64788c" stroke-width="3.4" stroke-linejoin="round"/><path d="M41 873.5 H101" stroke="#cf3a3f" stroke-width="6"/><path d="M78.3 858 L110 830" stroke="#111" stroke-width="4.6"/><path d="M124 818 L114 843 L98 825Z" fill="#111"/></svg>
<svg class="ic" style="left:1052px;top:665px" width="40" height="180" viewBox="0 0 201 905"><path d="M42.3 119.2 L133.7 30.5 V85.9 L100.4 119.2 Z" fill="#fff" stroke="#64788c" stroke-width="3.4" stroke-linejoin="round"/><path d="M134 29 V87" stroke="#cf3a3f" stroke-width="6"/><path d="M76 108 L108 80" stroke="#111" stroke-width="4.6"/><path d="M122 68 L112 93 L96 75Z" fill="#111"/><circle cx="68" cy="234" r="30" fill="#fff" stroke="#64788c" stroke-width="5"/><path d="M68 234 V204 A30 30 0 0 1 98 234 Z M68 234 V264 A30 30 0 0 1 38 234 Z" fill="#64788c"/><path d="M68 202 V266 M36 234 H146" stroke="#64788c" stroke-width="5"/><path d="M110.6 220 L123.2 200.6 L135.8 220Z M110.6 247.6 L123.2 266.5 L135.8 247.6Z" fill="#64788c"/><path d="M57 425 V340 H120 V425" fill="#fff" stroke="#64788c" stroke-width="3"/><path d="M57 425 H120" stroke="#64788c" stroke-width="3"/><path d="M42 410 H136" stroke="#cf3a3f" stroke-width="3.5" stroke-dasharray="8 4"/><path d="M120 358 V392" stroke="#111" stroke-width="4"/><path d="M120 345 L111 364 H129Z M120 404 L111 386 H129Z" fill="#111"/><path d="M42 530 L62 515 H140 L138 538 L125 552 H42 Z" fill="#fff" stroke="#64788c" stroke-width="3" stroke-linejoin="round"/><path d="M42 530 H125 L140 515 M125 530 V552" fill="none" stroke="#64788c" stroke-width="3"/><path d="M50 534 l12 14 m0 -14 l-12 14 M66 534 l12 14 m0 -14 l-12 14 M82 534 l12 14 m0 -14 l-12 14 M98 534 l12 14 m0 -14 l-12 14 M112 534 l10 14 m0 -14 l-10 14" stroke="#64788c" stroke-width="2.4"/><path d="M52 676 H98 V722 H52 Z M78 650 H124 V696 H78 Z M52 676 L78 650 M98 676 L124 650 M52 722 L78 696 M98 722 L124 696" fill="none" stroke="#5d7185" stroke-width="4"/><path d="M42 686 L88 640 M88 686 L134 640 M42 732 L88 686 M88 732 L134 686 M40 676 H110 M40 722 H110 M52 664 V734 M98 664 V734 M66 650 H136 M66 696 H136 M78 638 V708 M124 638 V708" fill="none" stroke="#5d7185" stroke-width="2.2" opacity=".55"/><circle cx="52" cy="676" r="4.2" fill="#111"/><circle cx="98" cy="676" r="4.2" fill="#111"/><circle cx="52" cy="722" r="4.2" fill="#111"/><circle cx="98" cy="722" r="4.2" fill="#111"/><circle cx="78" cy="650" r="4.2" fill="#111"/><circle cx="124" cy="650" r="4.2" fill="#111"/><circle cx="78" cy="696" r="4.2" fill="#111"/><circle cx="124" cy="696" r="4.2" fill="#111"/><path d="M40.3 835 L60.6 811 H131 Q134.5 811 134.5 814.5 V859 Q134.5 862.6 131 862.6 H60.6 Z" fill="#64788c"/><rect x="65" y="816" width="66.5" height="42" rx="2" fill="#fff"/><circle cx="48" cy="836" r="3" fill="#fff"/><text x="98" y="849.6" font-size="35" font-weight="bold" text-anchor="middle" fill="#111" font-family="Liberation Sans,sans-serif">A1</text></svg>
<div class="fld" style="top:491px"><svg style="position:absolute;left:6px;top:3.5px" width="13.4" height="12.5" viewBox="0 0 15 14"><rect x="2.5" y="2" width="11" height="10.5" fill="none" stroke="#64788c" stroke-width="1"/><g fill="#fff" stroke="#64788c" stroke-width=".9"><circle cx="2.5" cy="2" r="1.5"/><circle cx="8" cy="2" r="1.5"/><circle cx="13.5" cy="2" r="1.5"/><circle cx="2.5" cy="7.2" r="1.5"/><circle cx="8" cy="7.2" r="1.5"/><circle cx="13.5" cy="7.2" r="1.5"/><circle cx="8" cy="12.5" r="1.5"/><circle cx="13.5" cy="12.5" r="1.5"/></g><rect x=".8" y="10.6" width="3.4" height="3.4" fill="#cf3a3f"/></svg><span style="margin-left:21px">Вверху сп</span><span class="a"></span></div>
<div class="fld" style="top:521px"><span class="n">0,00</span><span class="u">мм</span></div>
<div class="fld" style="top:551px"><span class="n">0,00</span><span class="u">мм</span></div>
<div class="fld" style="top:581px">Козырек* (2,2<span class="a"></span></div>
<div class="fld" style="top:611px"><span class="n">0,00</span><span class="u">°</span></div>
<div class="fld" style="top:641px">Авто<span class="a"></span></div>
<div class="fld" style="top:671px">Авто<span class="a"></span></div>
<div class="fld" style="top:701px">Крыша АГД<span class="a"></span></div>
<div class="fld" style="top:731px"><span class="n">-4 710,00</span><span class="u">мм</span></div>
<div class="fld" style="top:761px">Металлочере<span class="a"></span></div>
<div class="fld" style="top:791px">(нет)<span class="a"></span></div>
<div class="fld" style="top:821px">Козырек<span class="a"></span></div>
</body></html>
